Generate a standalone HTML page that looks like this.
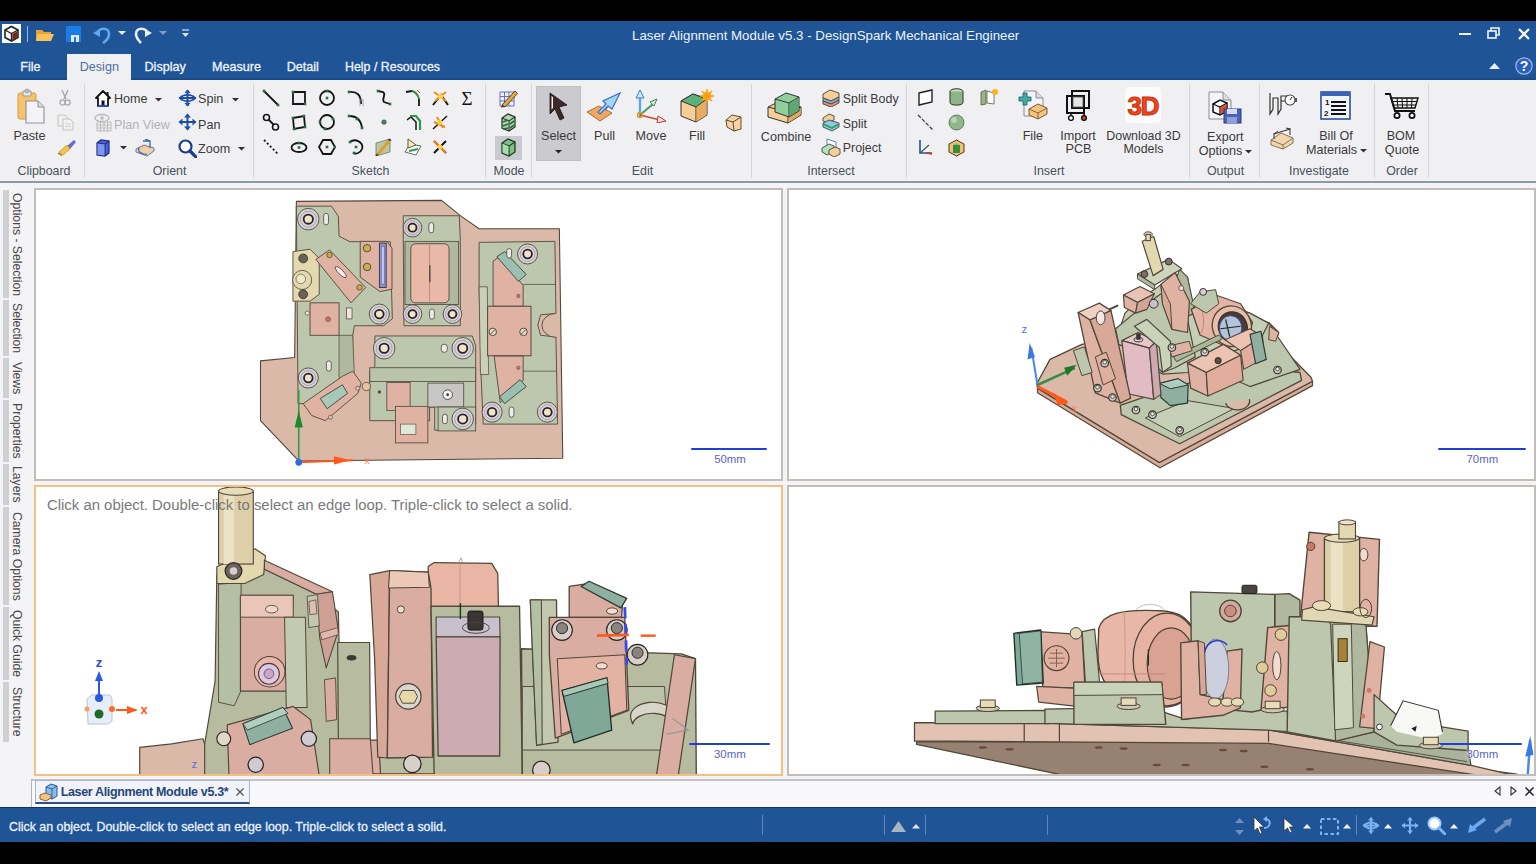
<!DOCTYPE html>
<html><head><meta charset="utf-8"><style>
html,body{margin:0;padding:0;width:1536px;height:864px;overflow:hidden;background:#f1f1f3;}
body{position:relative;font-family:"Liberation Sans",sans-serif;}
.t{position:absolute;line-height:1;white-space:pre;}
.r{position:absolute;display:block;}
#wrap{position:absolute;left:0;top:0;width:1536px;height:864px;}
</style></head><body><div id="wrap">
<div class="r" style="left:0px;top:0px;width:1536px;height:21px;background:#000;"></div>
<div class="r" style="left:0px;top:21px;width:1536px;height:59px;background:#1f5497;"></div>
<div class="r" style="left:0px;top:842px;width:1536px;height:22px;background:#000;"></div>
<div class="r" style="left:0px;top:80px;width:1536px;height:101px;background:#f0f0f3;"></div>
<div class="r" style="left:0px;top:181px;width:1536px;height:2px;background:#8b9bab;"></div>
<div class="r" style="left:0px;top:183px;width:1536px;height:625px;background:#f4f4f7;"></div>
<div class="r" style="left:0px;top:807px;width:1536px;height:35px;background:#1f5497;"></div>
<div class="r" style="left:0px;top:807px;width:1536px;height:1px;background:#13335e;"></div>
<div class="t" style="left:632.0px;top:28.7px;font-size:13.3px;color:#eef3fa;">Laser Alignment Module v5.3 - DesignSpark Mechanical Engineer</div>
<svg class="r" style="left:2px;top:24px;" width="19" height="19" viewBox="0 0 19 19"><rect x="0" y="0" width="19" height="19" fill="#fff"/><path d="M9.5 2.5 L16 6 L16 13.5 L9.5 17 L3 13.5 L3 6 Z" fill="#fff" stroke="#222" stroke-width="1.6"/><path d="M3 6 L9.5 9.5 L16 6 M9.5 9.5 L9.5 17" fill="none" stroke="#222" stroke-width="1.4"/><path d="M10.3 10 L15.3 7.3 L15.3 13 L10.3 15.8 Z" fill="#7a2414"/></svg>
<div class="r" style="left:27px;top:26px;width:1px;height:16px;background:#9fb6d8;"></div>
<svg class="r" style="left:36px;top:28px;" width="18" height="14" viewBox="0 0 18 14"><path d="M0 2 L6 2 L8 4 L15 4 L15 13 L0 13 Z" fill="#e9a33a"/><path d="M2 6 L18 6 L15 13 L0 13 Z" fill="#fbc15b"/></svg>
<svg class="r" style="left:66px;top:26px;" width="15" height="16" viewBox="0 0 15 16"><rect x="0" y="0" width="15" height="16" fill="#1c7ce6"/><rect x="5" y="9" width="8" height="7" fill="#dfe9f7"/><rect x="8" y="11" width="2" height="5" fill="#1c7ce6"/></svg>
<svg class="r" style="left:93px;top:25px;transform:scaleX(1)" width="19" height="20" viewBox="0 0 19 20"><path d="M4 9 C6 2, 16 2, 16 9 C16 13, 13 16, 10 18" fill="none" stroke="#5fa8f4" stroke-width="2.6"/><path d="M0 8 L7 4 L7 12 Z" fill="#5fa8f4"/></svg>
<svg class="r" style="left:118px;top:31px;" width="8" height="5" viewBox="0 0 8 5"><path d="M0 0 L8 0 L4 4 Z" fill="#e8eef8"/></svg>
<svg class="r" style="left:134px;top:25px;" width="18" height="20" viewBox="0 0 18 20"><path d="M14 9 C12 2, 2 2, 2 9 C2 13, 5 16, 7 18" fill="none" stroke="#e8eef8" stroke-width="2.6"/><path d="M18 8 L11 4 L11 12 Z" fill="#e8eef8"/></svg>
<svg class="r" style="left:159px;top:31px;" width="8" height="5" viewBox="0 0 8 5"><path d="M0 0 L8 0 L4 4 Z" fill="#7f9cc4"/></svg>
<svg class="r" style="left:181px;top:29px;" width="9" height="9" viewBox="0 0 9 9"><path d="M1 1 L8 1" stroke="#dbe6f3" stroke-width="1.2"/><path d="M1 4 L8 4 L4.5 8 Z" fill="#dbe6f3"/></svg>
<div class="r" style="left:1459px;top:32.5px;width:12px;height:2.4px;background:#f0f4fa;"></div>
<svg class="r" style="left:1487px;top:27px;" width="14" height="13" viewBox="0 0 14 13"><rect x="1" y="4" width="8" height="7" fill="none" stroke="#f0f4fa" stroke-width="1.6"/><path d="M4 4 L4 1 L12 1 L12 8 L9 8" fill="none" stroke="#f0f4fa" stroke-width="1.6"/></svg>
<svg class="r" style="left:1518px;top:28px;" width="12" height="12" viewBox="0 0 12 12"><path d="M1 1 L11 11 M11 1 L1 11" stroke="#f0f4fa" stroke-width="2.4"/></svg>
<div class="r" style="left:67px;top:54px;width:64px;height:26px;background:#f0f0f3;"></div>
<div class="t" style="left:20.3px;top:60.7px;font-size:12.6px;color:#eef3fa;-webkit-text-stroke:0.3px #eef3fa;">File</div>
<div class="t" style="left:79.7px;top:60.7px;font-size:12.6px;color:#4d6fa0;">Design</div>
<div class="t" style="left:144.5px;top:60.7px;font-size:12.6px;color:#eef3fa;-webkit-text-stroke:0.3px #eef3fa;">Display</div>
<div class="t" style="left:212.0px;top:60.7px;font-size:12.6px;color:#eef3fa;-webkit-text-stroke:0.3px #eef3fa;">Measure</div>
<div class="t" style="left:286.7px;top:60.7px;font-size:12.6px;color:#eef3fa;-webkit-text-stroke:0.3px #eef3fa;">Detail</div>
<div class="t" style="left:345.0px;top:60.9px;font-size:12.4px;color:#eef3fa;-webkit-text-stroke:0.3px #eef3fa;">Help / Resources</div>
<div class="r" style="left:0px;top:78px;width:67px;height:2px;background:#1a4a8a;"></div>
<div class="r" style="left:131px;top:78px;width:1405px;height:2px;background:#1a4a8a;"></div>
<svg class="r" style="left:1489px;top:63px;" width="11" height="6" viewBox="0 0 11 6"><path d="M0 6 L5.5 0 L11 6 Z" fill="#e9eef6"/></svg>
<svg class="r" style="left:1515px;top:57px;" width="18" height="18" viewBox="0 0 18 18"><circle cx="9" cy="9" r="8.2" fill="#2a5fc2" stroke="#9fb7e0" stroke-width="1.2"/><text x="9" y="14.2" font-size="14" font-weight="bold" text-anchor="middle" fill="#fff" font-family="Liberation Sans">?</text></svg>
<div class="r" style="left:84px;top:84px;width:1px;height:94px;background:#d3d5da;"></div>
<div class="r" style="left:253px;top:84px;width:1px;height:94px;background:#d3d5da;"></div>
<div class="r" style="left:485px;top:84px;width:1px;height:94px;background:#d3d5da;"></div>
<div class="r" style="left:531px;top:84px;width:1px;height:94px;background:#d3d5da;"></div>
<div class="r" style="left:751px;top:84px;width:1px;height:94px;background:#d3d5da;"></div>
<div class="r" style="left:906px;top:84px;width:1px;height:94px;background:#d3d5da;"></div>
<div class="r" style="left:1189px;top:84px;width:1px;height:94px;background:#d3d5da;"></div>
<div class="r" style="left:1259px;top:84px;width:1px;height:94px;background:#d3d5da;"></div>
<div class="r" style="left:1374px;top:84px;width:1px;height:94px;background:#d3d5da;"></div>
<div class="r" style="left:1428px;top:84px;width:1px;height:94px;background:#d3d5da;"></div>
<div class="t" style="left:-106.0px;width:300px;text-align:center;top:164.5px;font-size:12.4px;color:#48505a;">Clipboard</div>
<div class="t" style="left:19.5px;width:300px;text-align:center;top:164.5px;font-size:12.4px;color:#48505a;">Orient</div>
<div class="t" style="left:220.5px;width:300px;text-align:center;top:164.5px;font-size:12.4px;color:#48505a;">Sketch</div>
<div class="t" style="left:359.0px;width:300px;text-align:center;top:164.5px;font-size:12.4px;color:#48505a;">Mode</div>
<div class="t" style="left:492.5px;width:300px;text-align:center;top:164.5px;font-size:12.4px;color:#48505a;">Edit</div>
<div class="t" style="left:681.0px;width:300px;text-align:center;top:164.5px;font-size:12.4px;color:#48505a;">Intersect</div>
<div class="t" style="left:899.0px;width:300px;text-align:center;top:164.5px;font-size:12.4px;color:#48505a;">Insert</div>
<div class="t" style="left:1075.5px;width:300px;text-align:center;top:164.5px;font-size:12.4px;color:#48505a;">Output</div>
<div class="t" style="left:1169.0px;width:300px;text-align:center;top:164.5px;font-size:12.4px;color:#48505a;">Investigate</div>
<div class="t" style="left:1252.0px;width:300px;text-align:center;top:164.5px;font-size:12.4px;color:#48505a;">Order</div>
<svg class="r" style="left:17px;top:88px;" width="28" height="36" viewBox="0 0 28 36"><rect x="1" y="5" width="18" height="26" rx="2" fill="#f6c26b" stroke="#d99a3a" stroke-width="1"/><path d="M6 3 L14 3 L14 8 L6 8 Z" fill="#e8e8e8" stroke="#9a9a9a" stroke-width="1"/><circle cx="10" cy="3" r="2" fill="none" stroke="#9a9a9a" stroke-width="1"/><path d="M9 13 L21 13 L27 19 L27 35 L9 35 Z" fill="#f4f4f8" stroke="#8f8f9a" stroke-width="1.1"/><path d="M21 13 L21 19 L27 19" fill="#dadae2" stroke="#8f8f9a" stroke-width="1"/></svg>
<div class="t" style="left:-120.5px;width:300px;text-align:center;top:130.1px;font-size:12.6px;color:#3a3a3a;">Paste</div>
<svg class="r" style="left:59px;top:89px;" width="12" height="18" viewBox="0 0 12 18"><path d="M3 1 L7 10 M9 1 L5 10" stroke="#a8a8a8" stroke-width="1.4"/><circle cx="3.5" cy="13.5" r="2.6" fill="none" stroke="#a8a8a8" stroke-width="1.3"/><circle cx="8.5" cy="13.5" r="2.6" fill="none" stroke="#a8a8a8" stroke-width="1.3"/></svg>
<svg class="r" style="left:57px;top:114px;" width="18" height="17" viewBox="0 0 18 17"><path d="M1 1 L8 1 L11 4 L11 12 L1 12 Z" fill="#efefef" stroke="#c4c4c4"/><path d="M6 5 L13 5 L16 8 L16 16 L6 16 Z" fill="#f2f2f2" stroke="#c4c4c4"/><path d="M8 10 L14 10 M8 12.5 L14 12.5" stroke="#cfcfcf"/></svg>
<svg class="r" style="left:57px;top:139px;" width="19" height="17" viewBox="0 0 19 17"><path d="M10 7 L17 1 L19 3 L13 10 Z" fill="#6a6bd0"/><path d="M2 13 L10 6 L13 10 L6 16 Z" fill="#f1c44a" stroke="#c79a2a" stroke-width="0.8"/><path d="M1 14 L5 16.5" stroke="#8a6a22" stroke-width="1.2"/></svg>
<svg class="r" style="left:95px;top:90px;" width="16" height="17" viewBox="0 0 16 17"><path d="M8 1 L15 8 L13 8 L13 16 L3 16 L3 8 L1 8 Z" fill="#fff" stroke="#111" stroke-width="1.8" stroke-linejoin="round"/><rect x="6.5" y="10.5" width="3" height="5" fill="#111"/><path d="M3 16 L13 16" stroke="#2c49c8" stroke-width="2.2"/><rect x="11.5" y="2" width="2" height="4" fill="#111"/></svg>
<div class="t" style="left:114.0px;top:93.3px;font-size:12.6px;color:#3a3a3a;">Home</div>
<svg class="r" style="left:155px;top:98px;" width="7" height="4" viewBox="0 0 7 4"><path d="M0 0 L7 0 L3.5 3.5 Z" fill="#333"/></svg>
<svg class="r" style="left:178px;top:89px;" width="19" height="18" viewBox="0 0 19 18"><path d="M9.5 1 L9.5 17 M1 9 L18 9" stroke="#1d4fa8" stroke-width="2"/><path d="M6.5 4 L9.5 0.5 L12.5 4 Z M6.5 14 L9.5 17.5 L12.5 14 Z M4 6 L0.5 9 L4 12 Z M15 6 L18.5 9 L15 12 Z" fill="#1d4fa8"/><ellipse cx="9.5" cy="9" rx="6" ry="3.2" fill="none" stroke="#1d4fa8" stroke-width="1.8"/></svg>
<div class="t" style="left:198.0px;top:93.3px;font-size:12.6px;color:#3a3a3a;">Spin</div>
<svg class="r" style="left:232px;top:98px;" width="7" height="4" viewBox="0 0 7 4"><path d="M0 0 L7 0 L3.5 3.5 Z" fill="#333"/></svg>
<svg class="r" style="left:94px;top:113px;" width="18" height="19" viewBox="0 0 18 19"><ellipse cx="8" cy="5" rx="7" ry="3.5" fill="none" stroke="#b9b9b9" stroke-width="1.3"/><circle cx="8" cy="5" r="1.8" fill="#b9b9b9"/><path d="M3 9 L17 9 L17 18 L3 18 Z M3 12 L17 12 M3 15 L17 15 M6.5 9 L6.5 18 M10 9 L10 18 M13.5 9 L13.5 18" fill="none" stroke="#bcbcbc" stroke-width="1"/></svg>
<div class="t" style="left:114.0px;top:118.5px;font-size:12.6px;color:#b3b3b3;">Plan View</div>
<svg class="r" style="left:178px;top:113px;" width="19" height="18" viewBox="0 0 19 18"><path d="M9.5 1.5 L9.5 16.5 M1.5 9 L17.5 9" stroke="#1d4fa8" stroke-width="2"/><path d="M6 4.5 L9.5 0.5 L13 4.5 Z M6 13.5 L9.5 17.5 L13 13.5 Z M4.5 5.5 L0.5 9 L4.5 12.5 Z M14.5 5.5 L18.5 9 L14.5 12.5 Z" fill="#1d4fa8"/></svg>
<div class="t" style="left:198.0px;top:118.5px;font-size:12.6px;color:#3a3a3a;">Pan</div>
<svg class="r" style="left:95px;top:139px;" width="15" height="18" viewBox="0 0 15 18"><path d="M2 4 L6 1 L14 2 L14 14 L10 17 L2 16 Z" fill="#4b63d8" stroke="#1a2a80" stroke-width="1.2"/><path d="M2 4 L10 5 L14 2 M10 5 L10 17" fill="none" stroke="#1a2a80" stroke-width="1.1"/><path d="M2.5 4.5 L9.5 5.5 L9.5 16.5 L2.5 15.5 Z" fill="#7f95ef"/></svg>
<svg class="r" style="left:120px;top:146px;" width="7" height="4" viewBox="0 0 7 4"><path d="M0 0 L7 0 L3.5 3.5 Z" fill="#333"/></svg>
<svg class="r" style="left:135px;top:139px;" width="20" height="18" viewBox="0 0 20 18"><path d="M1 10 L9 6 L19 9 L12 14 Z" fill="#f3c88d" stroke="#6a7a9a" stroke-width="1"/><path d="M1 10 L1 13 L12 17 L19 12 L19 9" fill="#e8d0b0" stroke="#6a7a9a" stroke-width="1"/><path d="M8 2 L15 2 L15 9 M10 0 L15 2" fill="none" stroke="#3f63b0" stroke-width="1.3"/><path d="M4 9 C2 13, 8 16, 12 15" fill="none" stroke="#3f63b0" stroke-width="1.2"/></svg>
<svg class="r" style="left:178px;top:139px;" width="19" height="19" viewBox="0 0 19 19"><circle cx="7.5" cy="7.5" r="6" fill="#fff" stroke="#1b3b8c" stroke-width="2.2"/><path d="M12 12 L18 18" stroke="#1b3b8c" stroke-width="3.2" stroke-linecap="round"/></svg>
<div class="t" style="left:198.0px;top:143.3px;font-size:12.6px;color:#3a3a3a;">Zoom</div>
<svg class="r" style="left:238px;top:147px;" width="7" height="4" viewBox="0 0 7 4"><path d="M0 0 L7 0 L3.5 3.5 Z" fill="#333"/></svg>
<svg class="r" style="left:262px;top:89px;" width="18" height="18" viewBox="0 0 18 18"><path d="M2 2 L16 16" stroke="#151515" stroke-width="1.8"/><rect x="0.7" y="0.7" width="2.6" height="2.6" fill="#2b6b4a"/><rect x="14.7" y="14.7" width="2.6" height="2.6" fill="#2b6b4a"/></svg>
<svg class="r" style="left:290px;top:89px;" width="18" height="18" viewBox="0 0 18 18"><path d="M3 3 L15 3 L15 15 L3 15 Z" fill="none" stroke="#151515" stroke-width="1.8"/><rect x="1.7" y="1.7" width="2.6" height="2.6" fill="#2b6b4a"/><rect x="13.7" y="13.7" width="2.6" height="2.6" fill="#2b6b4a"/></svg>
<svg class="r" style="left:318px;top:89px;" width="18" height="18" viewBox="0 0 18 18"><circle cx="9" cy="9" r="7" fill="none" stroke="#151515" stroke-width="1.8"/><rect x="7.7" y="7.7" width="2.6" height="2.6" fill="#2b6b4a"/><rect x="7.7" y="0.7" width="2.6" height="2.6" fill="#2b6b4a"/></svg>
<svg class="r" style="left:347px;top:89px;" width="18" height="18" viewBox="0 0 18 18"><path d="M2 3 C10 2, 14 6, 14 15" fill="none" stroke="#151515" stroke-width="1.8"/><path d="M13 10 L13 17 M16 10 L16 17" stroke="#9a9a9a" stroke-width="0.9"/><rect x="0.7" y="1.7" width="2.6" height="2.6" fill="#2b6b4a"/></svg>
<svg class="r" style="left:375px;top:89px;" width="18" height="18" viewBox="0 0 18 18"><path d="M3 2 L8 3 C12 5, 6 10, 9 13 L15 15" fill="none" stroke="#151515" stroke-width="1.8"/><rect x="1.7" y="0.7" width="2.6" height="2.6" fill="#2b6b4a"/><rect x="13.7" y="13.7" width="2.6" height="2.6" fill="#2b6b4a"/></svg>
<svg class="r" style="left:404px;top:89px;" width="18" height="18" viewBox="0 0 18 18"><path d="M2 3 L8 2" stroke="#151515" stroke-width="1.8"/><path d="M8 2 C12 3, 14 6, 15 10" fill="none" stroke="#2f8a4a" stroke-width="2"/><path d="M15 10 L15 17" stroke="#151515" stroke-width="1.8"/><path d="M13 1 L16 4" stroke="#d03020" stroke-width="1"/></svg>
<svg class="r" style="left:431px;top:89px;" width="18" height="18" viewBox="0 0 18 18"><path d="M2 16 L10 6 L17 16" fill="none" stroke="#151515" stroke-width="2"/><path d="M3 3 L15 12 M15 3 L4 12" stroke="#f08a20" stroke-width="2"/><circle cx="9.5" cy="7.5" r="2.6" fill="#ffd23a"/></svg>
<svg class="r" style="left:458px;top:89px;" width="18" height="18" viewBox="0 0 18 18"><text x="9" y="16" font-size="19" text-anchor="middle" fill="#151515" font-family="Liberation Serif">&#931;</text></svg>
<svg class="r" style="left:262px;top:113px;" width="18" height="18" viewBox="0 0 18 18"><circle cx="4.5" cy="4.5" r="3" fill="none" stroke="#151515" stroke-width="1.6"/><path d="M6.5 6.5 L12 12" stroke="#151515" stroke-width="1.8"/><circle cx="13.5" cy="14" r="3" fill="none" stroke="#151515" stroke-width="1.6"/></svg>
<svg class="r" style="left:290px;top:113px;" width="18" height="18" viewBox="0 0 18 18"><path d="M3 5 L14 3 L15 14 L4 16 Z" fill="none" stroke="#151515" stroke-width="1.8"/><rect x="1.7" y="3.7" width="2.6" height="2.6" fill="#2b6b4a"/><rect x="12.7" y="1.7" width="2.6" height="2.6" fill="#2b6b4a"/><rect x="13.7" y="12.7" width="2.6" height="2.6" fill="#2b6b4a"/><rect x="2.7" y="14.7" width="2.6" height="2.6" fill="#2b6b4a"/></svg>
<svg class="r" style="left:318px;top:113px;" width="18" height="18" viewBox="0 0 18 18"><circle cx="9" cy="9" r="7" fill="none" stroke="#151515" stroke-width="1.8"/><rect x="0.7" y="7.7" width="2.6" height="2.6" fill="#2b6b4a"/><rect x="13.7" y="4.7" width="2.6" height="2.6" fill="#2b6b4a"/><rect x="5.7" y="14.7" width="2.6" height="2.6" fill="#2b6b4a"/></svg>
<svg class="r" style="left:347px;top:113px;" width="18" height="18" viewBox="0 0 18 18"><path d="M2 3 C9 3, 14 7, 15 15" fill="none" stroke="#151515" stroke-width="1.8"/><rect x="0.7" y="1.7" width="2.6" height="2.6" fill="#2b6b4a"/><rect x="8.7" y="4.7" width="2.6" height="2.6" fill="#2b6b4a"/><rect x="13.7" y="13.7" width="2.6" height="2.6" fill="#2b6b4a"/></svg>
<svg class="r" style="left:375px;top:113px;" width="18" height="18" viewBox="0 0 18 18"><circle cx="9" cy="9" r="2.6" fill="#3d7a56"/></svg>
<svg class="r" style="left:404px;top:113px;" width="18" height="18" viewBox="0 0 18 18"><path d="M3 7 L7 4 L12 9 L12 17" fill="none" stroke="#151515" stroke-width="1.5"/><path d="M6 3 L12 3 L16 8 L16 17" fill="none" stroke="#2a9a4a" stroke-width="2.2"/></svg>
<svg class="r" style="left:431px;top:113px;" width="18" height="18" viewBox="0 0 18 18"><path d="M2 16 L16 3" stroke="#151515" stroke-width="1.4"/><path d="M3 9 L14 14 M6 4 L12 15" stroke="#f08a20" stroke-width="2"/><circle cx="9" cy="9.5" r="2.4" fill="#ffd23a"/></svg>
<svg class="r" style="left:262px;top:138px;" width="18" height="18" viewBox="0 0 18 18"><path d="M2 2 L16 16" stroke="#151515" stroke-width="1.8" stroke-dasharray="2 2.2"/></svg>
<svg class="r" style="left:290px;top:138px;" width="18" height="18" viewBox="0 0 18 18"><ellipse cx="9" cy="9.5" rx="7.5" ry="4.5" fill="none" stroke="#151515" stroke-width="1.8"/><rect x="7.7" y="8.2" width="2.6" height="2.6" fill="#2b6b4a"/><rect x="7.7" y="3.7" width="2.6" height="2.6" fill="#2b6b4a"/></svg>
<svg class="r" style="left:318px;top:138px;" width="18" height="18" viewBox="0 0 18 18"><path d="M5 2 L13 2 L17 9 L13 16 L5 16 L1 9 Z" fill="none" stroke="#151515" stroke-width="1.8"/><rect x="7.7" y="7.7" width="2.6" height="2.6" fill="#2b6b4a"/><rect x="15.7" y="7.7" width="2.6" height="2.6" fill="#2b6b4a"/></svg>
<svg class="r" style="left:347px;top:138px;" width="18" height="18" viewBox="0 0 18 18"><path d="M3 4 C8 0, 17 4, 15 11 C13 16, 8 16, 7 15" fill="none" stroke="#151515" stroke-width="1.8"/><rect x="7.7" y="7.7" width="2.6" height="2.6" fill="#2b6b4a"/><rect x="1.7" y="2.7" width="2.6" height="2.6" fill="#2b6b4a"/><rect x="5.7" y="13.7" width="2.6" height="2.6" fill="#2b6b4a"/></svg>
<svg class="r" style="left:375px;top:138px;" width="18" height="18" viewBox="0 0 18 18"><path d="M1 5 L15 1 L15 14 L1 18 Z" fill="#b6c8a8" stroke="#6a7a60" stroke-width="0.8"/><path d="M3 16 L14 3" stroke="#e39b2a" stroke-width="3"/><path d="M3 16 L1 18" stroke="#333" stroke-width="1.5"/><path d="M13 2 L15 1 L16 3" stroke="#444" stroke-width="1"/></svg>
<svg class="r" style="left:404px;top:138px;" width="18" height="18" viewBox="0 0 18 18"><path d="M1 14 L6 6 L17 8 L12 17 Z" fill="#fff" stroke="#6a6a6a" stroke-width="1"/><path d="M4 1 L4 10 L12 7 Z" fill="#fff3a8" stroke="#555" stroke-width="1"/><path d="M5 13 L14 11" stroke="#2a9a4a" stroke-width="2"/></svg>
<svg class="r" style="left:431px;top:138px;" width="18" height="18" viewBox="0 0 18 18"><path d="M3 15 L15 3 M3 3 L15 15" stroke="#151515" stroke-width="2"/><path d="M3 3 L15 15" stroke="#f08a20" stroke-width="2"/><circle cx="9" cy="9" r="2.4" fill="#ffd23a"/></svg>
<div class="r" style="left:495px;top:136px;width:27px;height:24px;background:#c9cacf;"></div>
<svg class="r" style="left:499px;top:89px;" width="19" height="19" viewBox="0 0 19 19"><path d="M1 3 L15 3 L15 17 L1 17 Z M1 7.5 L15 7.5 M1 12 L15 12 M5.5 3 L5.5 17 M10 3 L10 17" fill="none" stroke="#5a63b8" stroke-width="0.9"/><path d="M3 16 L16 2 L18.5 4.5 L6 18 Z" fill="#f0a830" stroke="#333" stroke-width="0.9"/><path d="M3 16 L2 18.5 L6 18" fill="#333"/></svg>
<svg class="r" style="left:500px;top:113px;" width="17" height="19" viewBox="0 0 17 19"><path d="M2 5 L8 1 L15 4 L15 14 L9 18 L2 15 Z" fill="#b6d8b4" stroke="#2a3a2a" stroke-width="1.3"/><path d="M2 5 L9 8 L15 4 M9 8 L9 18" fill="none" stroke="#2a3a2a" stroke-width="1.1"/><path d="M3 9 L8 7 M3 13 L8 11 M3 16 L8 15 M10 11 L14 8 M10 15 L14 12" stroke="#2a6a3a" stroke-width="1.6"/></svg>
<svg class="r" style="left:500px;top:138px;" width="17" height="19" viewBox="0 0 17 19"><path d="M2 5 L8 1 L15 4 L15 14 L9 18 L2 15 Z" fill="#7fc08a" stroke="#1e3a22" stroke-width="1.3"/><path d="M2 5 L9 8 L15 4 M9 8 L9 18" fill="none" stroke="#1e3a22" stroke-width="1.1"/><path d="M2.6 5.6 L8.4 8.3 L8.4 17 L2.6 14.6 Z" fill="#a8dca8"/></svg>
<div class="r" style="left:536px;top:86px;width:45px;height:75px;background:#cbcbcf;border:1px solid #bdbdc2;box-sizing:border-box;"></div>
<svg class="r" style="left:548px;top:92px;" width="21" height="30" viewBox="0 0 21 30"><path d="M2 1 L19 13 L11 15 L16 26 L12 28 L7 17 L2 22 Z" fill="#3b2a26" stroke="#1a1210" stroke-width="0.8"/><path d="M3.5 4 L5 5 L5 16 L3.5 17.5 Z" fill="#f4eeee"/></svg>
<div class="t" style="left:408.5px;width:300px;text-align:center;top:130.1px;font-size:12.6px;color:#3a3a3a;">Select</div>
<svg class="r" style="left:554.5px;top:150px;" width="7" height="4" viewBox="0 0 7 4"><path d="M0 0 L7 0 L3.5 3.5 Z" fill="#222"/></svg>
<svg class="r" style="left:586px;top:92px;" width="36" height="32" viewBox="0 0 36 32"><path d="M1 20 L13 14 L26 21 L14 29 Z" fill="#f0a860" stroke="#b36a30" stroke-width="1"/><path d="M14 21 L23 12 M19 18 L22 14" stroke="#3a70c0" stroke-width="1.4"/><path d="M34 1 L26 17 L22 14 L14 22 L12 20 L20 12 L17 9 Z" fill="#a8d4f6" stroke="#3a70c0" stroke-width="1.2"/></svg>
<div class="t" style="left:454.5px;width:300px;text-align:center;top:130.1px;font-size:12.6px;color:#3a3a3a;">Pull</div>
<svg class="r" style="left:634px;top:89px;" width="33" height="34" viewBox="0 0 33 34"><path d="M6 28 L6 5" stroke="#5aa8e8" stroke-width="2.4"/><path d="M2 9 L6 1 L10 9 Z" fill="#cfe6f8" stroke="#3a80c0" stroke-width="1"/><path d="M6 26 L19 15" stroke="#4e9a72" stroke-width="2.2"/><path d="M16 13 L23 10 L20 17 Z" fill="#d0ecd8" stroke="#3a8a5a" stroke-width="1"/><path d="M6 26 L26 31" stroke="#d04a3a" stroke-width="1.8"/><path d="M24 27 L32 32 L23 34 Z" fill="#fbe0dc" stroke="#c03a2a" stroke-width="1"/><circle cx="6" cy="26" r="2.5" fill="none" stroke="#d8a020" stroke-width="1.4"/></svg>
<div class="t" style="left:501.0px;width:300px;text-align:center;top:130.1px;font-size:12.6px;color:#3a3a3a;">Move</div>
<svg class="r" style="left:680px;top:89px;" width="34" height="34" viewBox="0 0 34 34"><path d="M1 12 L13 5 L27 10 L27 26 L16 33 L1 27 Z" fill="#f6cf96" stroke="#333" stroke-width="1"/><path d="M1 12 L16 18 L27 10 L13 5 Z" fill="#5cb07a" stroke="#333" stroke-width="1"/><path d="M16 18 L16 33" stroke="#333" stroke-width="1"/><path d="M16.5 18.5 L26.5 11 L26.5 26 L16.5 32.5 Z" fill="#eaaa62"/><circle cx="27" cy="7" r="4.5" fill="#ffb21e"/><path d="M27 0 L27 14 M20 7 L34 7 M22 2 L32 12 M32 2 L22 12" stroke="#ff9a10" stroke-width="1.4"/></svg>
<div class="t" style="left:547.0px;width:300px;text-align:center;top:130.1px;font-size:12.6px;color:#3a3a3a;">Fill</div>
<svg class="r" style="left:725px;top:114px;" width="18" height="18" viewBox="0 0 18 18"><path d="M7 1 L16 3 L16 15 L9 17 L2 13 L1 6 Z" fill="#f6d3a0" stroke="#5a4a3a" stroke-width="1"/><path d="M1 6 L8 8 L16 3 M8 8 L9 17" fill="none" stroke="#5a4a3a" stroke-width="1"/></svg>
<svg class="r" style="left:767px;top:91px;" width="35" height="33" viewBox="0 0 35 33"><path d="M1 16 L9 12 L34 16 L34 24 L21 32 L1 26 Z" fill="#f6cf96" stroke="#333" stroke-width="1"/><path d="M1 16 L21 21 L34 16" fill="none" stroke="#333" stroke-width="1"/><path d="M21 21 L21 32" stroke="#333"/><path d="M21.5 21.5 L33.5 16.5 L33.5 23.5 L21.5 31.5 Z" fill="#e7a860"/><path d="M8 8 L19 2 L32 6 L32 20 L22 26 L8 21 Z" fill="#8fcf9c" stroke="#333" stroke-width="1"/><path d="M8 8 L22 12 L32 6 M22 12 L22 26" fill="none" stroke="#333" stroke-width="1"/><path d="M22.5 12.5 L31.5 6.8 L31.5 19.5 L22.5 25.3 Z" fill="#5da872"/></svg>
<div class="t" style="left:636.0px;width:300px;text-align:center;top:130.5px;font-size:12.6px;color:#3a3a3a;">Combine</div>
<svg class="r" style="left:822px;top:89px;" width="18" height="18" viewBox="0 0 18 18"><path d="M1 5 L8 1 L17 4 L17 8 L9 12 L1 9 Z" fill="#f6cf96" stroke="#444" stroke-width="0.9"/><path d="M1 9 L9 12 L17 8 L17 11 L9 15 L1 12 Z" fill="#7ab8e8" stroke="#444" stroke-width="0.9"/><path d="M1 12 L9 15 L17 11 L17 14 L9 18 L1 15 Z" fill="#f08a70" stroke="#444" stroke-width="0.9"/></svg>
<div class="t" style="left:842.8px;top:93.1px;font-size:12.4px;color:#3a3a3a;">Split Body</div>
<svg class="r" style="left:822px;top:113px;" width="18" height="19" viewBox="0 0 18 19"><path d="M1 5 L7 1 L12 3 L12 7 L6 10 L1 8 Z" fill="#f6cf96" stroke="#444" stroke-width="0.9"/><path d="M1 10 L7 7 L17 10 L17 14 L10 18 L1 14 Z" fill="#8ac8ee" stroke="#444" stroke-width="0.9"/><path d="M1 11 L10 15 L17 11" fill="none" stroke="#2aa040" stroke-width="1.6"/></svg>
<div class="t" style="left:842.8px;top:117.5px;font-size:12.4px;color:#3a3a3a;">Split</div>
<svg class="r" style="left:821px;top:138px;" width="20" height="19" viewBox="0 0 20 19"><path d="M6 1 L15 4 L15 10 L6 7 Z" fill="#fff" stroke="#5a80c0" stroke-width="1"/><path d="M1 10 L8 6 L13 8 L13 13 L6 17 L1 14 Z" fill="#b4e0b8" stroke="#444" stroke-width="0.9"/><path d="M8 12 L14 9 L19 11 L19 16 L13 19 L8 16 Z" fill="#f6cf96" stroke="#444" stroke-width="0.9"/></svg>
<div class="t" style="left:842.8px;top:141.9px;font-size:12.4px;color:#3a3a3a;">Project</div>
<svg class="r" style="left:917px;top:89px;" width="17" height="17" viewBox="0 0 17 17"><path d="M2 4 L15 1 L15 13 L2 16 Z" fill="#fff" stroke="#222" stroke-width="1.4"/></svg>
<svg class="r" style="left:948px;top:88px;" width="17" height="18" viewBox="0 0 17 18"><ellipse cx="8.5" cy="3.5" rx="6.5" ry="2.8" fill="#c4dcc0" stroke="#333" stroke-width="1"/><path d="M2 3.5 L2 14.5 C2 18, 15 18, 15 14.5 L15 3.5" fill="#8eb488" stroke="#333" stroke-width="1"/></svg>
<svg class="r" style="left:980px;top:88px;" width="19" height="18" viewBox="0 0 19 18"><path d="M1 4 L6 2 L6 16 L1 17 Z" fill="#9ab878" stroke="#555" stroke-width="0.8"/><path d="M7 3 L14 5 L14 16 L7 15 Z" fill="#fff" stroke="#555" stroke-width="0.8"/><circle cx="15" cy="4" r="3" fill="#ffb21e"/></svg>
<svg class="r" style="left:917px;top:114px;" width="17" height="17" viewBox="0 0 17 17"><path d="M1 1 L16 16" stroke="#444" stroke-width="1.3" stroke-dasharray="4 1.5"/></svg>
<svg class="r" style="left:948px;top:114px;" width="17" height="17" viewBox="0 0 17 17"><circle cx="8.5" cy="8.5" r="7.5" fill="#8fb88a" stroke="#4a6a48" stroke-width="0.8"/><circle cx="6" cy="6" r="3" fill="#c8e0c4" opacity="0.7"/></svg>
<svg class="r" style="left:917px;top:139px;" width="17" height="17" viewBox="0 0 17 17"><path d="M3 1 L3 14 L15 14" fill="none" stroke="#2a4aa8" stroke-width="1.6"/><path d="M3 14 L12 6" stroke="#2a6a40" stroke-width="1.3"/><path d="M9 14 L15 15" stroke="#d03a20" stroke-width="1.3"/></svg>
<svg class="r" style="left:948px;top:139px;" width="17" height="18" viewBox="0 0 17 18"><path d="M8.5 1 L16 5 L16 13 L8.5 17 L1 13 L1 5 Z" fill="#f2c070" stroke="#4a3a20" stroke-width="1"/><path d="M5 6 L12 6 L12 14 L5 14 Z" fill="#3a8a40"/><path d="M5 6 L8.5 4 L12 6" fill="#7ac070"/></svg>
<svg class="r" style="left:1018px;top:90px;" width="30" height="32" viewBox="0 0 30 32"><path d="M6 1 L18 1 L25 8 L25 26 L6 26 Z" fill="#f4f4f8" stroke="#8a8a9a" stroke-width="1"/><path d="M18 1 L18 8 L25 8" fill="#ddd" stroke="#8a8a9a"/><path d="M5 3 L9 3 L9 7 L13 7 L13 11 L9 11 L9 15 L5 15 L5 11 L1 11 L1 7 L5 7 Z" fill="#48a8a0" stroke="#206a70" stroke-width="0.9"/><path d="M11 19 L20 14 L29 18 L29 24 L20 29 L11 25 Z" fill="#f4c47c" stroke="#7a5a30" stroke-width="1"/><path d="M11 19 L20 23 L29 18 M20 23 L20 29" fill="none" stroke="#7a5a30" stroke-width="0.9"/></svg>
<div class="t" style="left:882.8px;width:300px;text-align:center;top:130.1px;font-size:12.6px;color:#3a3a3a;">File</div>
<svg class="r" style="left:1065px;top:90px;" width="26" height="31" viewBox="0 0 26 31"><rect x="7" y="1" width="17" height="17" fill="none" stroke="#111" stroke-width="2"/><rect x="2" y="6" width="17" height="17" fill="none" stroke="#111" stroke-width="2"/><rect x="8" y="7" width="10" height="10" fill="#e4e4e4" stroke="#555" stroke-width="0.8"/><path d="M6 23 L6 26 M19 23 L19 26" stroke="#111" stroke-width="1.6"/><circle cx="6" cy="28" r="2.4" fill="#fff" stroke="#111" stroke-width="1.4"/><circle cx="19" cy="28" r="2.4" fill="#e04020" stroke="#111" stroke-width="1.4"/></svg>
<div class="t" style="left:928.0px;width:300px;text-align:center;top:130.1px;font-size:12.6px;color:#3a3a3a;">Import</div>
<div class="t" style="left:928.5px;width:300px;text-align:center;top:143.1px;font-size:12.6px;color:#3a3a3a;">PCB</div>
<div class="r" style="left:1125px;top:87px;width:36px;height:36px;background:#fbfbfc;border-radius:5px;"></div>
<div class="t" style="left:993.0px;width:300px;text-align:center;top:92.5px;font-size:26px;color:#f0461c;font-weight:bold;letter-spacing:-1px;-webkit-text-stroke:1px #c83010;">3D</div>
<div class="t" style="left:993.5px;width:300px;text-align:center;top:130.3px;font-size:12.4px;color:#3a3a3a;">Download 3D</div>
<div class="t" style="left:993.5px;width:300px;text-align:center;top:143.3px;font-size:12.4px;color:#3a3a3a;">Models</div>
<svg class="r" style="left:1208px;top:91px;" width="34" height="33" viewBox="0 0 34 33"><path d="M1 1 L15 1 L23 9 L23 28 L1 28 Z" fill="#f6f6f8" stroke="#8a8a9a" stroke-width="1"/><path d="M15 1 L15 9 L23 9" fill="#ddd" stroke="#8a8a9a"/><path d="M5 13 L12 9 L19 12 L19 20 L12 24 L5 21 Z" fill="#fff" stroke="#111" stroke-width="1.5"/><path d="M5 13 L12 16 L19 12 M12 16 L12 24" fill="none" stroke="#111" stroke-width="1.3"/><path d="M12.6 16.5 L18.4 13 L18.4 19.6 L12.6 23 Z" fill="#e84a1c"/><rect x="16" y="18" width="17" height="14" fill="#4a62b8" stroke="#283c80"/><rect x="19" y="18" width="10" height="5" fill="#d8def0"/><rect x="19" y="26" width="10" height="6" fill="#8fa0d8"/></svg>
<div class="t" style="left:1075.2px;width:300px;text-align:center;top:131.1px;font-size:12.6px;color:#3a3a3a;">Export</div>
<div class="t" style="left:1070.5px;width:300px;text-align:center;top:145.3px;font-size:12.6px;color:#3a3a3a;">Options</div>
<svg class="r" style="left:1245px;top:150px;" width="7" height="4" viewBox="0 0 7 4"><path d="M0 0 L7 0 L3.5 3.5 Z" fill="#333"/></svg>
<svg class="r" style="left:1268px;top:92px;" width="29" height="24" viewBox="0 0 29 24"><path d="M2 1 L2 22 L5 17 L5 6 L10 6 L10 22 L13 17 L13 4 L22 4 L22 9 L13 9" fill="#f4f4f4" stroke="#333" stroke-width="1.2"/><circle cx="22" cy="8" r="5" fill="#fff" stroke="#444" stroke-width="1.1"/><path d="M22 8 L24 5" stroke="#333"/><rect x="27" y="6" width="2" height="4" fill="#555"/></svg>
<svg class="r" style="left:1269px;top:125px;" width="25" height="25" viewBox="0 0 25 25"><path d="M2 15 L12 8 L24 13 L24 18 L14 24 L2 20 Z" fill="#f2d6b0" stroke="#8a7050" stroke-width="1"/><path d="M2 15 L14 20 L24 13 M14 20 L14 24" fill="none" stroke="#8a7050" stroke-width="1"/><path d="M5 8 L5 14 M21 3 L21 10" stroke="#333" stroke-width="1"/><path d="M5 9 L21 4" stroke="#333" stroke-width="1.1"/><path d="M5 9 L9 6 M21 4 L17 3" stroke="#333" stroke-width="1"/></svg>
<svg class="r" style="left:1320px;top:91px;" width="31" height="29" viewBox="0 0 31 29"><rect x="1" y="1" width="29" height="27" fill="#f2f4fa" stroke="#2f4f9a" stroke-width="1.6"/><rect x="1" y="1" width="29" height="4" fill="#3a64b8"/><text x="5" y="14" font-size="8" font-weight="bold" fill="#111" font-family="Liberation Sans">1</text><text x="4" y="25" font-size="8" font-weight="bold" fill="#111" font-family="Liberation Sans">2</text><path d="M11 11 L26 11 M11 15 L26 15 M11 19 L26 19 M11 23 L26 23" stroke="#111" stroke-width="1.8"/></svg>
<div class="t" style="left:1186.0px;width:300px;text-align:center;top:130.1px;font-size:12.6px;color:#3a3a3a;">Bill Of</div>
<div class="t" style="left:1181.5px;width:300px;text-align:center;top:143.9px;font-size:12.6px;color:#3a3a3a;">Materials</div>
<svg class="r" style="left:1360px;top:149px;" width="7" height="4" viewBox="0 0 7 4"><path d="M0 0 L7 0 L3.5 3.5 Z" fill="#333"/></svg>
<svg class="r" style="left:1384px;top:92px;" width="36" height="28" viewBox="0 0 36 28"><path d="M1 2 L6 2 L11 19 L31 19" fill="none" stroke="#111" stroke-width="2"/><path d="M7 6 L34 6 L31 16 L10 16 Z" fill="none" stroke="#111" stroke-width="1.4"/><path d="M8 9.5 L33 9.5 M9 13 L32 13 M13 6 L14 16 M18 6 L18.5 16 M23 6 L23 16 M28 6 L27.5 16" stroke="#111" stroke-width="1"/><circle cx="13" cy="23.5" r="2.6" fill="#fff" stroke="#111" stroke-width="1.8"/><circle cx="28" cy="23.5" r="2.6" fill="#fff" stroke="#111" stroke-width="1.8"/></svg>
<div class="t" style="left:1251.0px;width:300px;text-align:center;top:130.1px;font-size:12.6px;color:#3a3a3a;">BOM</div>
<div class="t" style="left:1252.0px;width:300px;text-align:center;top:143.9px;font-size:12.6px;color:#3a3a3a;">Quote</div>
<div class="r" style="left:3px;top:190px;width:6px;height:108px;background:#cfd0d4;"></div>
<div class="r" style="left:9px;top:190px;width:21px;height:108px;background:#f4f4f6;"></div>
<div class="t" style="left:10px;top:190px;width:14px;height:108px;writing-mode:vertical-rl;font-size:12.2px;color:#484848;text-align:center;line-height:14px;">Options - Selection</div>
<div class="r" style="left:3px;top:300px;width:6px;height:56px;background:#cfd0d4;"></div>
<div class="r" style="left:9px;top:300px;width:21px;height:56px;background:#f4f4f6;"></div>
<div class="t" style="left:10px;top:300px;width:14px;height:56px;writing-mode:vertical-rl;font-size:12.2px;color:#484848;text-align:center;line-height:14px;">Selection</div>
<div class="r" style="left:3px;top:358px;width:6px;height:40px;background:#cfd0d4;"></div>
<div class="r" style="left:9px;top:358px;width:21px;height:40px;background:#f4f4f6;"></div>
<div class="t" style="left:10px;top:358px;width:14px;height:40px;writing-mode:vertical-rl;font-size:12.2px;color:#484848;text-align:center;line-height:14px;">Views</div>
<div class="r" style="left:3px;top:400px;width:6px;height:62px;background:#cfd0d4;"></div>
<div class="r" style="left:9px;top:400px;width:21px;height:62px;background:#f4f4f6;"></div>
<div class="t" style="left:10px;top:400px;width:14px;height:62px;writing-mode:vertical-rl;font-size:12.2px;color:#484848;text-align:center;line-height:14px;">Properties</div>
<div class="r" style="left:3px;top:464px;width:6px;height:41px;background:#cfd0d4;"></div>
<div class="r" style="left:9px;top:464px;width:21px;height:41px;background:#f4f4f6;"></div>
<div class="t" style="left:10px;top:464px;width:14px;height:41px;writing-mode:vertical-rl;font-size:12.2px;color:#484848;text-align:center;line-height:14px;">Layers</div>
<div class="r" style="left:3px;top:507px;width:6px;height:98px;background:#cfd0d4;"></div>
<div class="r" style="left:9px;top:507px;width:21px;height:98px;background:#f4f4f6;"></div>
<div class="t" style="left:10px;top:507px;width:14px;height:98px;writing-mode:vertical-rl;font-size:12.2px;color:#484848;text-align:center;line-height:14px;">Camera Options</div>
<div class="r" style="left:3px;top:607px;width:6px;height:73px;background:#cfd0d4;"></div>
<div class="r" style="left:9px;top:607px;width:21px;height:73px;background:#f4f4f6;"></div>
<div class="t" style="left:10px;top:607px;width:14px;height:73px;writing-mode:vertical-rl;font-size:12.2px;color:#484848;text-align:center;line-height:14px;">Quick Guide</div>
<div class="r" style="left:3px;top:682px;width:6px;height:60px;background:#cfd0d4;"></div>
<div class="r" style="left:9px;top:682px;width:21px;height:60px;background:#f4f4f6;"></div>
<div class="t" style="left:10px;top:682px;width:14px;height:60px;writing-mode:vertical-rl;font-size:12.2px;color:#484848;text-align:center;line-height:14px;">Structure</div>
<div class="r" style="left:34px;top:188px;width:749px;height:293px;background:#fff;border:2px solid #c4bcb7;box-sizing:border-box;"></div>
<div class="r" style="left:787px;top:188px;width:749px;height:293px;background:#fff;border:2px solid #c4bcb7;box-sizing:border-box;"></div>
<div class="r" style="left:787px;top:485px;width:749px;height:291px;background:#fff;border:2px solid #c4bcb7;box-sizing:border-box;"></div>
<div class="r" style="left:34px;top:485px;width:749px;height:291px;background:#fff;border:2px solid #f4bf82;box-sizing:border-box;"></div>
<div class="r" style="left:31px;top:779px;width:1505px;height:2px;background:#c4c4c8;"></div>
<div class="r" style="left:31px;top:781px;width:1505px;height:26px;background:#f8f8fa;"></div>
<div class="r" style="left:31px;top:779px;width:1px;height:28px;background:#b4b4b8;"></div>
<div class="r" style="left:35px;top:780px;width:215px;height:24px;background:#f1f3f8;border:1px solid #a9b4c6;border-bottom:2px solid #2c4f86;box-sizing:border-box;"></div>
<svg class="r" style="left:39px;top:783px;" width="19" height="19" viewBox="0 0 19 19"><path d="M7 4 L12 1 L18 3 L18 13 L13 16 L7 14 Z" fill="#86c0ee" stroke="#2a5a90" stroke-width="1"/><path d="M7 4 L13 6 L18 3 M13 6 L13 16" fill="none" stroke="#2a5a90" stroke-width="0.9"/><path d="M1 12 L6 10 L12 12 L12 15 L7 18 L1 16 Z" fill="#f4c47c" stroke="#7a5a30" stroke-width="0.9"/></svg>
<div class="t" style="left:60.7px;top:786.4px;font-size:12.5px;color:#25467a;font-weight:bold;letter-spacing:-0.35px;">Laser Alignment Module v5.3*</div>
<svg class="r" style="left:236px;top:788px;" width="8" height="8" viewBox="0 0 8 8"><path d="M0.5 0.5 L7.5 7.5 M7.5 0.5 L0.5 7.5" stroke="#555" stroke-width="1.3"/></svg>
<svg class="r" style="left:1494px;top:786px;" width="7" height="10" viewBox="0 0 7 10"><path d="M6 1 L1 5 L6 9 Z" fill="none" stroke="#333" stroke-width="1.1"/></svg>
<svg class="r" style="left:1510px;top:786px;" width="7" height="10" viewBox="0 0 7 10"><path d="M1 1 L6 5 L1 9 Z" fill="none" stroke="#333" stroke-width="1.1"/></svg>
<svg class="r" style="left:1525px;top:787px;" width="9" height="9" viewBox="0 0 9 9"><path d="M0.5 0.5 L8.5 8.5 M8.5 0.5 L0.5 8.5" stroke="#222" stroke-width="1.5"/></svg>
<div class="t" style="left:9.0px;top:820.8px;font-size:12.4px;color:#eaf0f8;-webkit-text-stroke:0.3px #eaf0f8;">Click an object. Double-click to select an edge loop. Triple-click to select a solid.</div>
<div class="r" style="left:762px;top:815px;width:1px;height:20px;background:#5f86bf;"></div>
<div class="r" style="left:884px;top:815px;width:1px;height:20px;background:#5f86bf;"></div>
<div class="r" style="left:925px;top:815px;width:1px;height:20px;background:#5f86bf;"></div>
<div class="r" style="left:1047px;top:815px;width:1px;height:20px;background:#5f86bf;"></div>
<div class="r" style="left:1356px;top:815px;width:1px;height:20px;background:#5f86bf;"></div>
<svg class="r" style="left:890px;top:820px;" width="17" height="13" viewBox="0 0 17 13"><path d="M1 12 L8.5 1 L16 12 Z" fill="#a8b4c4"/></svg>
<svg class="r" style="left:912px;top:824px;" width="8" height="5" viewBox="0 0 8 5"><path d="M0 4.5 L4 0 L8 4.5 Z" fill="#dfe8f4"/></svg>
<svg class="r" style="left:1234px;top:817px;" width="11" height="19" viewBox="0 0 11 19"><path d="M1 6 L5.5 1 L10 6 Z M1 13 L5.5 18 L10 13 Z" fill="#6f8fbf"/></svg>
<svg class="r" style="left:1253px;top:816px;" width="20" height="19" viewBox="0 0 20 19"><path d="M1 1 L1 15 L4.5 12 L7 18 L9 17 L6.5 11 L11 11 Z" fill="#fff" stroke="#333" stroke-width="0.8"/><path d="M11 12 C18 12, 19 3, 12 3" fill="none" stroke="#7ab4f0" stroke-width="2"/><path d="M14 0 L10 3 L14 6 Z" fill="#7ab4f0"/></svg>
<svg class="r" style="left:1283px;top:817px;" width="12" height="16" viewBox="0 0 12 16"><path d="M1 1 L1 14 L4.5 11 L7 16 L9 15 L6.5 10 L11 10 Z" fill="#fff" stroke="#333" stroke-width="0.8"/></svg>
<svg class="r" style="left:1303px;top:824px;" width="8" height="5" viewBox="0 0 8 5"><path d="M0 4.5 L4 0 L8 4.5 Z" fill="#f2f6fb"/></svg>
<svg class="r" style="left:1343px;top:824px;" width="8" height="5" viewBox="0 0 8 5"><path d="M0 4.5 L4 0 L8 4.5 Z" fill="#f2f6fb"/></svg>
<svg class="r" style="left:1384px;top:824px;" width="8" height="5" viewBox="0 0 8 5"><path d="M0 4.5 L4 0 L8 4.5 Z" fill="#f2f6fb"/></svg>
<svg class="r" style="left:1450px;top:824px;" width="8" height="5" viewBox="0 0 8 5"><path d="M0 4.5 L4 0 L8 4.5 Z" fill="#f2f6fb"/></svg>
<svg class="r" style="left:1320px;top:818px;" width="19" height="17" viewBox="0 0 19 17"><rect x="1" y="1" width="17" height="15" fill="none" stroke="#7ab4f0" stroke-width="2" stroke-dasharray="3.5 2.5"/></svg>
<svg class="r" style="left:1362px;top:816px;" width="18" height="19" viewBox="0 0 18 19"><path d="M9 1.5 L9 17.5 M1 9.5 L17 9.5" stroke="#7ab4f0" stroke-width="2"/><path d="M6 4.5 L9 1 L12 4.5 Z M6 14.5 L9 18 L12 14.5 Z M4 6.5 L0.5 9.5 L4 12.5 Z M14 6.5 L17.5 9.5 L14 12.5 Z" fill="#7ab4f0"/><ellipse cx="9" cy="9.5" rx="5.5" ry="3" fill="none" stroke="#7ab4f0" stroke-width="1.8"/></svg>
<svg class="r" style="left:1401px;top:816px;" width="18" height="19" viewBox="0 0 18 19"><path d="M9 1.5 L9 17.5 M1 9.5 L17 9.5" stroke="#7ab4f0" stroke-width="2"/><path d="M6 4.5 L9 1 L12 4.5 Z M6 14.5 L9 18 L12 14.5 Z M4 6.5 L0.5 9.5 L4 12.5 Z M14 6.5 L17.5 9.5 L14 12.5 Z" fill="#7ab4f0"/></svg>
<svg class="r" style="left:1427px;top:816px;" width="19" height="19" viewBox="0 0 19 19"><circle cx="7.5" cy="7.5" r="6" fill="#fff" stroke="#9ccaf8" stroke-width="2"/><path d="M12 12 L18 18" stroke="#7ab4f0" stroke-width="3" stroke-linecap="round"/></svg>
<svg class="r" style="left:1467px;top:817px;" width="19" height="17" viewBox="0 0 19 17"><path d="M18 2 L6 11" stroke="#6aaaf0" stroke-width="3.5"/><path d="M1 16 L3 7 L10 13 Z" fill="#6aaaf0"/></svg>
<svg class="r" style="left:1494px;top:817px;" width="19" height="17" viewBox="0 0 19 17"><path d="M1 15 L13 6" stroke="#6f8fbf" stroke-width="3.5"/><path d="M18 1 L16 10 L9 4 Z" fill="#6f8fbf"/></svg>
<svg class="r" style="left:0;top:0" width="1536" height="864" viewBox="0 0 1536 864"><defs><clipPath id="c1"><rect x="36" y="190" width="745" height="289"/></clipPath></defs><g clip-path="url(#c1)"><g transform="translate(240,185) scale(0.341556)"><polygon points="165,48 590,45 648,92 700,128 935,128 945,800 172,808 60,690 60,515 160,505" fill="#dbb9a9" stroke="#50483a" stroke-width="3.12" stroke-linejoin="round" /><polygon points="165,62 268,62 288,92 290,150 322,166 440,166 446,392 420,412 335,412 330,440 330,590 300,640 170,640" fill="#bdc7ad" stroke="#50483a" stroke-width="2.64" stroke-linejoin="round" /><polygon points="290,440 330,440 335,560 300,600 290,560" fill="#b0b99f" stroke="#50483a" stroke-width="2.16" stroke-linejoin="round" /><polygon points="155,195 205,188 232,215 232,320 205,340 155,340" fill="#e4d9ae" stroke="#50483a" stroke-width="2.64" stroke-linejoin="round" /><circle cx="182" cy="278" r="28" fill="#e4d9ae" stroke="#50483a" stroke-width="2.40"/><circle cx="178" cy="275" r="14" fill="#f0e8c8" stroke="#50483a" stroke-width="1.80"/><circle cx="185" cy="215" r="13" fill="#6a6258" stroke="#332" stroke-width="2.40"/><circle cx="185" cy="320" r="13" fill="#6a6258" stroke="#332" stroke-width="2.40"/><polygon points="222,218 262,190 368,300 325,345" fill="#e0b2a4" stroke="#50483a" stroke-width="2.64" stroke-linejoin="round" /><ellipse cx="295" cy="255" rx="22" ry="7" transform="rotate(45 295 255)" fill="#f6ecea" stroke="#4c4236" stroke-width="2.40"/><circle cx="262" cy="205" r="8" fill="#c8a848" stroke="#332" stroke-width="1.80"/><circle cx="350" cy="300" r="8" fill="#c8a848" stroke="#332" stroke-width="1.80"/><polygon points="352,165 430,165 445,185 445,305 410,312 352,270" fill="#e0b2a4" stroke="#50483a" stroke-width="2.64" stroke-linejoin="round" /><rect x="408" y="170" width="20" height="130" rx="0" fill="#8a90c8" stroke="#2a2a3a" stroke-width="2.40"/><rect x="414" y="180" width="8" height="110" rx="0" fill="#c4c8f0" stroke="#4a4aa0" stroke-width="1.20"/><circle cx="372" cy="185" r="11" fill="#c9ad50" stroke="#332" stroke-width="2.16"/><circle cx="372" cy="240" r="11" fill="#c9ad50" stroke="#332" stroke-width="2.16"/><rect x="205" y="345" width="85" height="95" rx="0" fill="#e0b2a4" stroke="#50483a" stroke-width="2.64"/><circle cx="258" cy="393" r="7" fill="#c87a6a" stroke="#5b3a30" stroke-width="1.80"/><circle cx="197" cy="375" r="6" fill="#f4e8e0" stroke="#4c4236" stroke-width="1.80"/><rect x="312" y="360" width="16" height="32" rx="0" fill="#efe7df" stroke="#50483a" stroke-width="2.16"/><polygon points="185,640 300,560 330,545 355,580 345,610 250,690 210,675" fill="#e0b2a4" stroke="#50483a" stroke-width="2.64" stroke-linejoin="round" /><polygon points="235,625 300,585 315,610 255,655" fill="#a8c8b8" stroke="#2a3a30" stroke-width="2.40" stroke-linejoin="round" /><circle cx="345" cy="595" r="6" fill="#d8c8b8" stroke="#4c4236" stroke-width="1.80"/><circle cx="265" cy="680" r="6" fill="#d8c8b8" stroke="#4c4236" stroke-width="1.80"/><circle cx="200" cy="100" r="31.5" fill="#d6d2d8" stroke="#50483a" stroke-width="2.64"/><circle cx="200" cy="100" r="23.4" fill="none" stroke="#8a8690" stroke-width="1.80"/><circle cx="200" cy="100" r="13.5" fill="#efe4cc" stroke="#2a2220" stroke-width="5.28"/><rect x="245.0" y="83.0" width="14" height="34" rx="7.0" fill="#ecece8" stroke="#50483a" stroke-width="2.40"/><circle cx="200" cy="565" r="29.4" fill="#d6d2d8" stroke="#50483a" stroke-width="2.64"/><circle cx="200" cy="565" r="21.8" fill="none" stroke="#8a8690" stroke-width="1.80"/><circle cx="200" cy="565" r="12.6" fill="#efe4cc" stroke="#2a2220" stroke-width="5.28"/><rect x="253.0" y="515.0" width="14" height="30" rx="7.0" fill="#ecece8" stroke="#50483a" stroke-width="2.40"/><circle cx="408" cy="378" r="29.4" fill="#d6d2d8" stroke="#50483a" stroke-width="2.64"/><circle cx="408" cy="378" r="21.8" fill="none" stroke="#8a8690" stroke-width="1.80"/><circle cx="408" cy="378" r="12.6" fill="#efe4cc" stroke="#2a2220" stroke-width="5.28"/><polygon points="478,90 642,90 645,160 645,412 480,412 478,160" fill="#bdc7ad" stroke="#50483a" stroke-width="2.64" stroke-linejoin="round" /><rect x="483" y="165" width="157" height="185" rx="0" fill="#b0b99f" stroke="#50483a" stroke-width="2.40"/><rect x="500" y="172" width="112" height="173" rx="14" fill="#e9b8a6" stroke="#50483a" stroke-width="2.64"/><line x1="555" y1="175" x2="555" y2="342" stroke="#b08878" stroke-width="2.40"/><line x1="556" y1="235" x2="556" y2="285" stroke="#222" stroke-width="2.88"/><circle cx="505" cy="125" r="27.3" fill="#d6d2d8" stroke="#50483a" stroke-width="2.64"/><circle cx="505" cy="125" r="20.3" fill="none" stroke="#8a8690" stroke-width="1.80"/><circle cx="505" cy="125" r="11.7" fill="#efe4cc" stroke="#2a2220" stroke-width="5.28"/><rect x="553.0" y="110.0" width="14" height="30" rx="7.0" fill="#ecece8" stroke="#50483a" stroke-width="2.40"/><circle cx="505" cy="378" r="27.3" fill="#d6d2d8" stroke="#50483a" stroke-width="2.64"/><circle cx="505" cy="378" r="20.3" fill="none" stroke="#8a8690" stroke-width="1.80"/><circle cx="505" cy="378" r="11.7" fill="#efe4cc" stroke="#2a2220" stroke-width="5.28"/><rect x="555.0" y="363.0" width="14" height="30" rx="7.0" fill="#ecece8" stroke="#50483a" stroke-width="2.40"/><circle cx="622" cy="378" r="27.3" fill="#d6d2d8" stroke="#50483a" stroke-width="2.64"/><circle cx="622" cy="378" r="20.3" fill="none" stroke="#8a8690" stroke-width="1.80"/><circle cx="622" cy="378" r="11.7" fill="#efe4cc" stroke="#2a2220" stroke-width="5.28"/><polygon points="395,442 680,442 690,470 690,545 690,700 600,718 570,718 570,650 555,650 555,690 380,690 380,545 395,530" fill="#bdc7ad" stroke="#50483a" stroke-width="2.64" stroke-linejoin="round" /><rect x="380" y="535" width="310" height="40" rx="0" fill="#bac4aa" stroke="#50483a" stroke-width="2.40"/><circle cx="422" cy="478" r="31.5" fill="#d6d2d8" stroke="#50483a" stroke-width="2.64"/><circle cx="422" cy="478" r="23.4" fill="none" stroke="#8a8690" stroke-width="1.80"/><circle cx="422" cy="478" r="13.5" fill="#efe4cc" stroke="#2a2220" stroke-width="5.28"/><circle cx="652" cy="478" r="31.5" fill="#d6d2d8" stroke="#50483a" stroke-width="2.64"/><circle cx="652" cy="478" r="23.4" fill="none" stroke="#8a8690" stroke-width="1.80"/><circle cx="652" cy="478" r="13.5" fill="#efe4cc" stroke="#2a2220" stroke-width="5.28"/><rect x="589.0" y="466.0" width="18" height="24" rx="9.0" fill="#ecece8" stroke="#50483a" stroke-width="2.40"/><rect x="430" y="578" width="68" height="82" rx="0" fill="#e0b2a4" stroke="#50483a" stroke-width="2.40"/><rect x="455" y="648" width="95" height="107" rx="0" fill="#e0b2a4" stroke="#50483a" stroke-width="2.40"/><rect x="470" y="700" width="45" height="30" rx="0" fill="#dfe8d8" stroke="#50483a" stroke-width="1.80"/><rect x="550" y="580" width="105" height="70" rx="0" fill="#c8c6c4" stroke="#50483a" stroke-width="2.40"/><circle cx="608" cy="614" r="14" fill="#f4f4f4" stroke="#333" stroke-width="2.40"/><circle cx="608" cy="614" r="4" fill="#333"/><rect x="580" y="650" width="110" height="70" rx="0" fill="#bdc7ad" stroke="#50483a" stroke-width="2.40"/><circle cx="652" cy="685" r="31.5" fill="#d6d2d8" stroke="#50483a" stroke-width="2.64"/><circle cx="652" cy="685" r="23.4" fill="none" stroke="#8a8690" stroke-width="1.80"/><circle cx="652" cy="685" r="13.5" fill="#efe4cc" stroke="#2a2220" stroke-width="5.28"/><rect x="593.0" y="671.0" width="14" height="28" rx="7.0" fill="#ecece8" stroke="#50483a" stroke-width="2.40"/><circle cx="370" cy="590" r="12" fill="#e8c0a8" stroke="#4c4236" stroke-width="2.16"/><circle cx="408" cy="606" r="5" fill="#5b4a3c"/><polygon points="700,168 922,165 925,376 880,380 872,410 880,440 925,445 930,700 712,700 706,560 700,300" fill="#bdc7ad" stroke="#50483a" stroke-width="2.64" stroke-linejoin="round" /><path d="M925 376 A40 34 0 0 0 925 446" fill="#dbb9a9" stroke="#50483a" stroke-width="2.64"/><line x1="829" y1="291" x2="925" y2="291" stroke="#50483a" stroke-width="2.16"/><line x1="829" y1="545" x2="927" y2="545" stroke="#50483a" stroke-width="2.16"/><polygon points="700,298 724,298 728,555 704,555" fill="#c8d1b8" stroke="#50483a" stroke-width="2.16" stroke-linejoin="round" /><polygon points="741,223 760,210 829,294 829,355 741,355" fill="#e0b2a4" stroke="#50483a" stroke-width="2.64" stroke-linejoin="round" /><rect x="725" y="355" width="127" height="145" rx="0" fill="#e0b2a4" stroke="#50483a" stroke-width="2.88"/><polygon points="744,501 829,501 829,572 762,637" fill="#e0b2a4" stroke="#50483a" stroke-width="2.64" stroke-linejoin="round" /><polygon points="752,210 775,195 838,262 815,282" fill="#9cc0b0" stroke="#2a3a30" stroke-width="2.40" stroke-linejoin="round" /><polygon points="760,620 820,570 838,590 775,640" fill="#9cc0b0" stroke="#2a3a30" stroke-width="2.40" stroke-linejoin="round" /><circle cx="740" cy="430" r="11" fill="#e8d8c8" stroke="#332" stroke-width="2.40"/><circle cx="830" cy="430" r="11" fill="#e8d8c8" stroke="#332" stroke-width="2.40"/><line x1="733" y1="437" x2="747" y2="423" stroke="#332" stroke-width="2.40"/><line x1="823" y1="437" x2="837" y2="423" stroke="#332" stroke-width="2.40"/><circle cx="842" cy="202" r="29.4" fill="#d6d2d8" stroke="#50483a" stroke-width="2.64"/><circle cx="842" cy="202" r="21.8" fill="none" stroke="#8a8690" stroke-width="1.80"/><circle cx="842" cy="202" r="12.6" fill="#efe4cc" stroke="#2a2220" stroke-width="5.28"/><rect x="781.0" y="186.0" width="14" height="28" rx="7.0" fill="#ecece8" stroke="#50483a" stroke-width="2.40"/><circle cx="738" cy="665" r="29.4" fill="#d6d2d8" stroke="#50483a" stroke-width="2.64"/><circle cx="738" cy="665" r="21.8" fill="none" stroke="#8a8690" stroke-width="1.80"/><circle cx="738" cy="665" r="12.6" fill="#efe4cc" stroke="#2a2220" stroke-width="5.28"/><rect x="788.0" y="650.0" width="14" height="30" rx="7.0" fill="#ecece8" stroke="#50483a" stroke-width="2.40"/><circle cx="900" cy="665" r="29.4" fill="#d6d2d8" stroke="#50483a" stroke-width="2.64"/><circle cx="900" cy="665" r="21.8" fill="none" stroke="#8a8690" stroke-width="1.80"/><circle cx="900" cy="665" r="12.6" fill="#efe4cc" stroke="#2a2220" stroke-width="5.28"/><circle cx="815" cy="325" r="5" fill="#c87a6a" stroke="#5b3a30" stroke-width="1.44"/><circle cx="815" cy="535" r="5" fill="#c87a6a" stroke="#5b3a30" stroke-width="1.44"/><line x1="172" y1="812" x2="172" y2="600" stroke="#3a9a4a" stroke-width="4.80"/><polygon points="160,710 184,710 172,660" fill="#1a8a2a"/><line x1="172" y1="812" x2="330" y2="806" stroke="#ff5a1a" stroke-width="6.00"/><polygon points="275,794 275,818 325,806" fill="#ff5a1a"/><circle cx="172" cy="812" r="10" fill="#2a6ae8"/><text x="372" y="818" font-size="30" fill="#ff7a4a" text-anchor="middle" font-family="Liberation Sans">x</text></g></g></svg>
<svg class="r" style="left:0;top:0" width="1536" height="864" viewBox="0 0 1536 864"><defs><clipPath id="c2"><rect x="789" y="190" width="745" height="289"/></clipPath></defs><g clip-path="url(#c2)"><g transform="translate(1000,210) scale(0.312500)"><polygon points="120,570 510,808 1000,548 1000,562 512,825 120,585" fill="#d9ab98" stroke="#50483a" stroke-width="3.84" stroke-linejoin="round" /><polygon points="160,478 262,430 420,398 700,300 862,362 892,392 882,420 995,535 1000,548 510,808 120,570 118,555" fill="#dbb9a9" stroke="#50483a" stroke-width="4.16" stroke-linejoin="round" /><polygon points="385,625 560,565 740,520 800,500 960,520 965,545 575,748 388,655" fill="#bdc7ad" stroke="#50483a" stroke-width="4.16" stroke-linejoin="round" /><polygon points="465,665 600,610 750,635 575,725" fill="#c6d0b8" stroke="#50483a" stroke-width="3.20" stroke-linejoin="round" /><path d="M722 618 A36 26 0 0 0 798 605" fill="#dbb9a9" stroke="#4c4236" stroke-width="3.84"/><polygon points="720,430 860,360 885,400 960,510 800,565 700,520" fill="#bdc7ad" stroke="#50483a" stroke-width="3.84" stroke-linejoin="round" /><polygon points="380,390 400,330 440,290 500,250 560,205 600,215 615,300 650,280 720,300 800,330 860,362 830,420 700,470 600,520 520,525 420,470" fill="#c5cfb5" stroke="#50483a" stroke-width="3.84" stroke-linejoin="round" /><polygon points="575,190 600,215 625,330 600,340 560,230" fill="#b0b99f" stroke="#50483a" stroke-width="3.52" stroke-linejoin="round" /><polygon points="370,380 430,330 470,300 520,265 575,300 600,350 625,470 560,505 520,520 470,470 380,430" fill="#bdc7ad" stroke="#50483a" stroke-width="3.84" stroke-linejoin="round" /><polygon points="440,205 540,158 582,188 495,240" fill="#cdd5bd" stroke="#50483a" stroke-width="3.84" stroke-linejoin="round" /><polygon points="440,205 495,240 495,255 440,220" fill="#b0b99f" stroke="#50483a" stroke-width="3.20" stroke-linejoin="round" /><polygon points="395,272 448,245 494,268 440,296" fill="#e8c2b4" stroke="#50483a" stroke-width="3.84" stroke-linejoin="round" /><polygon points="395,272 440,296 434,330 398,312" fill="#e0b2a4" stroke="#50483a" stroke-width="3.84" stroke-linejoin="round" /><polygon points="440,296 494,268 470,318 434,330" fill="#d4a494" stroke="#50483a" stroke-width="3.52" stroke-linejoin="round" /><polygon points="455,100 492,85 522,190 490,210" fill="#e4d9ae" stroke="#50483a" stroke-width="3.84" stroke-linejoin="round" /><ellipse cx="474" cy="78" rx="13" ry="8" fill="#e8ddb8" stroke="#4c4236" stroke-width="3.20"/><rect x="467" y="78" width="14" height="20" fill="#e8ddb8" stroke="#4c4236" stroke-width="3.20"/><circle cx="462" cy="205" r="11" fill="#7a706a" stroke="#332" stroke-width="3.20"/><circle cx="540" cy="165" r="11" fill="#7a706a" stroke="#332" stroke-width="3.20"/><polygon points="515,238 560,200 606,292 600,392 550,382 520,300" fill="#e0b2a4" stroke="#50483a" stroke-width="3.84" stroke-linejoin="round" /><polygon points="515,238 520,300 550,382 545,300" fill="#d9a898" stroke="#50483a" stroke-width="3.20" stroke-linejoin="round" /><circle cx="580" cy="250" r="8" fill="#f0e0d8" stroke="#4c4236" stroke-width="2.56"/><circle cx="492" cy="300" r="14" fill="#c8c2cc" stroke="#332" stroke-width="3.20"/><polygon points="612,318 690,272 770,300 808,360 790,420 730,440 640,400" fill="#e4b4a4" stroke="#50483a" stroke-width="4.16" stroke-linejoin="round" /><path d="M640 300 C650 330, 660 370, 640 400" fill="none" stroke="#b88878" stroke-width="3.20"/><ellipse cx="742" cy="372" rx="62" ry="66" transform="rotate(-25 742 372)" fill="#e9bcac" stroke="#50483a" stroke-width="4.16"/><ellipse cx="745" cy="375" rx="46" ry="50" transform="rotate(-25 745 375)" fill="#4a3a3a" stroke="#332" stroke-width="3.52"/><ellipse cx="738" cy="378" rx="36" ry="40" fill="#b4c2dc" stroke="#3a4a7a" stroke-width="3.20"/><line x1="722" y1="350" x2="735" y2="405" stroke="#1a2a1a" stroke-width="3.84"/><line x1="705" y1="380" x2="770" y2="372" stroke="#1a2a1a" stroke-width="3.84"/><polygon points="610,300 640,262 690,255 700,300 660,330" fill="#bdc7ad" stroke="#50483a" stroke-width="3.20" stroke-linejoin="round" /><circle cx="650" cy="262" r="11" fill="#d8d0d8" stroke="#332" stroke-width="3.20"/><polygon points="555,470 700,400 712,412 565,485" fill="#a8b898" stroke="#50483a" stroke-width="3.20" stroke-linejoin="round" /><polygon points="600,490 715,430 770,465 660,520" fill="#edc4b4" stroke="#50483a" stroke-width="3.84" stroke-linejoin="round" /><polygon points="600,490 660,520 665,595 610,570" fill="#e0b2a4" stroke="#50483a" stroke-width="3.84" stroke-linejoin="round" /><polygon points="660,520 770,465 778,545 665,595" fill="#e2ad9c" stroke="#50483a" stroke-width="3.84" stroke-linejoin="round" /><polygon points="720,415 800,380 840,405 770,450" fill="#edc4b4" stroke="#50483a" stroke-width="3.52" stroke-linejoin="round" /><polygon points="770,450 840,405 845,475 780,510" fill="#e2ad9c" stroke="#50483a" stroke-width="3.52" stroke-linejoin="round" /><circle cx="698" cy="482" r="10" fill="#5a4a44" stroke="#332" stroke-width="3.20"/><polygon points="800,398 835,388 852,478 818,492" fill="#8fb0a0" stroke="#2a3a30" stroke-width="3.84" stroke-linejoin="round" /><polygon points="862,372 892,392 882,420 860,415" fill="#e0b2a4" stroke="#50483a" stroke-width="3.20" stroke-linejoin="round" /><polygon points="510,555 570,540 602,560 600,618 545,626 515,600" fill="#8fb0a0" stroke="#2a3a30" stroke-width="3.84" stroke-linejoin="round" /><polygon points="510,555 570,540 602,560 545,572" fill="#b0cec0" stroke="#2a3a30" stroke-width="3.20" stroke-linejoin="round" /><polygon points="390,418 442,392 500,420 478,442" fill="#e8c8cc" stroke="#50483a" stroke-width="3.84" stroke-linejoin="round" /><polygon points="390,418 478,442 492,606 410,588" fill="#e2bcc4" stroke="#50483a" stroke-width="3.84" stroke-linejoin="round" /><polygon points="478,442 500,420 515,590 492,606" fill="#cfa8b0" stroke="#50483a" stroke-width="3.84" stroke-linejoin="round" /><ellipse cx="443" cy="415" rx="14" ry="7" fill="#d8d0c8" stroke="#333" stroke-width="3.20"/><rect x="436" y="395" width="14" height="20" fill="#3a3030"/><polygon points="430,372 470,350 545,420 548,500 520,520 510,440" fill="#c9d3b9" stroke="#50483a" stroke-width="3.84" stroke-linejoin="round" /><polygon points="540,435 605,420 615,450 550,470" fill="#e0b2a4" stroke="#50483a" stroke-width="3.20" stroke-linejoin="round" /><polygon points="250,328 318,298 355,322 288,352" fill="#efd0c4" stroke="#50483a" stroke-width="3.84" stroke-linejoin="round" /><polygon points="250,328 288,352 385,618 305,585" fill="#e0b2a4" stroke="#50483a" stroke-width="4.16" stroke-linejoin="round" /><polygon points="288,352 355,322 418,602 385,618" fill="#d8a898" stroke="#50483a" stroke-width="4.16" stroke-linejoin="round" /><ellipse cx="322" cy="345" rx="14" ry="22" fill="#f4e8e4" stroke="#4c4236" stroke-width="3.20"/><polygon points="305,470 340,455 370,540 330,560" fill="#ddb0a0" stroke="#50483a" stroke-width="3.20" stroke-linejoin="round" /><circle cx="335" cy="490" r="12" fill="#d0ccd4" stroke="#332" stroke-width="3.84"/><circle cx="335" cy="487" r="6" fill="#ece8e0" stroke="#332" stroke-width="2.40"/><circle cx="312" cy="570" r="12" fill="#d0ccd4" stroke="#332" stroke-width="3.84"/><circle cx="312" cy="567" r="6" fill="#ece8e0" stroke="#332" stroke-width="2.40"/><circle cx="360" cy="600" r="12" fill="#d0ccd4" stroke="#332" stroke-width="3.84"/><circle cx="360" cy="597" r="6" fill="#ece8e0" stroke="#332" stroke-width="2.40"/><circle cx="435" cy="640" r="12" fill="#d0ccd4" stroke="#332" stroke-width="3.84"/><circle cx="435" cy="637" r="6" fill="#ece8e0" stroke="#332" stroke-width="2.40"/><circle cx="488" cy="655" r="12" fill="#d0ccd4" stroke="#332" stroke-width="3.84"/><circle cx="488" cy="652" r="6" fill="#ece8e0" stroke="#332" stroke-width="2.40"/><circle cx="575" cy="705" r="12" fill="#d0ccd4" stroke="#332" stroke-width="3.84"/><circle cx="575" cy="702" r="6" fill="#ece8e0" stroke="#332" stroke-width="2.40"/><circle cx="888" cy="512" r="12" fill="#d0ccd4" stroke="#332" stroke-width="3.84"/><circle cx="888" cy="509" r="6" fill="#ece8e0" stroke="#332" stroke-width="2.40"/><circle cx="550" cy="440" r="12" fill="#d0ccd4" stroke="#332" stroke-width="3.84"/><circle cx="550" cy="437" r="6" fill="#ece8e0" stroke="#332" stroke-width="2.40"/><circle cx="655" cy="455" r="12" fill="#d0ccd4" stroke="#332" stroke-width="3.84"/><circle cx="655" cy="452" r="6" fill="#ece8e0" stroke="#332" stroke-width="2.40"/><polygon points="235,450 270,438 295,520 262,530" fill="#bdc7ad" stroke="#50483a" stroke-width="3.20" stroke-linejoin="round" /><line x1="350" y1="318" x2="378" y2="305" stroke="#4c4236" stroke-width="6.40"/><line x1="120" y1="560" x2="100" y2="440" stroke="#4a8ae8" stroke-width="6.40"/><polygon points="88,478 112,470 95,425" fill="#3a7ae0"/><text x="78" y="395" font-size="34" fill="#4a70e0" text-anchor="middle" font-family="Liberation Sans">z</text><line x1="120" y1="560" x2="240" y2="505" stroke="#3a8a4a" stroke-width="8.00"/><polygon points="205,505 245,495 215,530" fill="#1a7a2a"/><line x1="120" y1="565" x2="215" y2="615" stroke="#ff5a1a" stroke-width="9.60"/><polygon points="170,585 220,618 185,625" fill="#ff5a1a"/><text x="238" y="645" font-size="32" fill="#ff7a4a" text-anchor="middle" font-family="Liberation Sans">x</text></g></g></svg>
<svg class="r" style="left:0;top:0" width="1536" height="864" viewBox="0 0 1536 864"><defs><clipPath id="c3"><rect x="36" y="487" width="745" height="287"/></clipPath></defs><g clip-path="url(#c3)"><g transform="translate(180,480) scale(0.397135)"><polygon points="380,650 640,690 860,700 1260,700 1300,740 380,740" fill="#b7bca1" stroke="#50483a" stroke-width="3.12" stroke-linejoin="round" /><polygon points="375,655 500,655 505,740 375,740" fill="#d9ada2" stroke="#50483a" stroke-width="3.12" stroke-linejoin="round" /><polygon points="625,218 640,208 785,210 800,235 802,322 625,322" fill="#e9b6a6" stroke="#50483a" stroke-width="3.12" stroke-linejoin="round" /><line x1="705" y1="212" x2="705" y2="320" stroke="#c89888" stroke-width="2.40"/><path d="M700 210 L708 196 L712 210" fill="none" stroke="#888" stroke-width="1.80"/><polygon points="478,238 528,228 522,700 498,698 490,450" fill="#d9a898" stroke="#50483a" stroke-width="3.12" stroke-linejoin="round" /><polygon points="528,228 625,232 632,272 636,698 522,700" fill="#d9ada2" stroke="#50483a" stroke-width="3.36" stroke-linejoin="round" /><polygon points="528,228 625,232 628,270 525,272" fill="#ecc8b8" stroke="#50483a" stroke-width="2.64" stroke-linejoin="round" /><ellipse cx="556" cy="326" rx="9" ry="9" fill="#f0dcd0" stroke="#4c4236" stroke-width="2.40"/><circle cx="575" cy="545" r="32" fill="#dcd6d0" stroke="#4c4236" stroke-width="3.12"/><polygon points="560,530 590,530 598,545 590,562 560,562 552,545" fill="#e8d8a8" stroke="#4c4236" stroke-width="2.40"/><polygon points="632,318 855,318 862,742 640,742" fill="#b7bca1" stroke="#50483a" stroke-width="3.36" stroke-linejoin="round" /><polygon points="645,345 805,345 806,395 645,395" fill="#c8c0cc" stroke="#50483a" stroke-width="2.88" stroke-linejoin="round" /><polygon points="645,395 806,395 805,695 650,695" fill="#ccacb2" stroke="#50483a" stroke-width="3.36" stroke-linejoin="round" /><rect x="725" y="330" width="38" height="48" rx="6" fill="#3a3432" stroke="#1a1412" stroke-width="2.40"/><ellipse cx="745" cy="372" rx="34" ry="14" fill="none" stroke="#4c4236" stroke-width="2.40"/><line x1="706" y1="310" x2="706" y2="350" stroke="#1a3a1a" stroke-width="3.60"/><polygon points="860,425 1262,438 1298,450 1300,742 862,742" fill="#b7bca1" stroke="#50483a" stroke-width="3.36" stroke-linejoin="round" /><polygon points="862,520 1220,520 1230,680 862,680" fill="#bcc2a8" stroke="#50483a" stroke-width="2.40" stroke-linejoin="round" /><polygon points="882,302 948,302 952,660 898,668" fill="#c2c8ae" stroke="#50483a" stroke-width="3.36" stroke-linejoin="round" /><polygon points="882,302 910,302 912,665 898,668" fill="#b4c0a4" stroke="#50483a" stroke-width="2.64" stroke-linejoin="round" /><polygon points="980,268 1018,262 1115,302 1112,346 980,346" fill="#d9ada2" stroke="#50483a" stroke-width="3.36" stroke-linejoin="round" /><polygon points="1010,268 1030,255 1125,298 1110,322" fill="#8fb0a0" stroke="#2a3a30" stroke-width="3.12" stroke-linejoin="round" /><polygon points="930,346 1120,346 1130,580 945,650 930,440" fill="#d9ada2" stroke="#50483a" stroke-width="3.36" stroke-linejoin="round" /><polygon points="950,450 1120,440 1125,580 960,640" fill="#e4b2a2" stroke="#50483a" stroke-width="2.64" stroke-linejoin="round" /><ellipse cx="1088" cy="330" rx="14" ry="8" fill="#f0dcd0" stroke="#4c4236" stroke-width="2.40"/><ellipse cx="1062" cy="468" rx="14" ry="8" fill="#f0dcd0" stroke="#4c4236" stroke-width="2.40"/><polygon points="962,530 1075,498 1087,630 992,662" fill="#7fa898" stroke="#1e3028" stroke-width="3.36" stroke-linejoin="round" /><polygon points="962,530 1075,498 1078,512 966,545" fill="#a8c8b8" stroke="#1e3028" stroke-width="2.40" stroke-linejoin="round" /><circle cx="962" cy="378" r="26" fill="#d8d0c8" stroke="#2a2420" stroke-width="2.88"/><circle cx="962" cy="373" r="14" fill="#8a8480" stroke="#2a2420" stroke-width="2.40"/><circle cx="1100" cy="378" r="26" fill="#d8d0c8" stroke="#2a2420" stroke-width="2.88"/><circle cx="1100" cy="373" r="14" fill="#8a8480" stroke="#2a2420" stroke-width="2.40"/><circle cx="1152" cy="440" r="26" fill="#d8d0c8" stroke="#2a2420" stroke-width="2.88"/><circle cx="1152" cy="435" r="14" fill="#8a8480" stroke="#2a2420" stroke-width="2.40"/><path d="M1135 600 A55 35 0 0 1 1245 590 L1240 620 A50 30 0 0 0 1140 615 Z" fill="#d8d6c8" stroke="#4c4236" stroke-width="2.88"/><polygon points="1245,440 1298,450 1255,742 1200,742" fill="#d9ada2" stroke="#50483a" stroke-width="3.12" stroke-linejoin="round" /><path d="M1240 600 L1280 630 L1225 640" fill="none" stroke="#999" stroke-width="3.00"/><line x1="1120" y1="320" x2="1125" y2="465" stroke="#3a4ae8" stroke-width="7.20" stroke-dasharray="28 14"/><line x1="1050" y1="392" x2="1130" y2="390" stroke="#ff5a1a" stroke-width="7.20"/><line x1="1160" y1="392" x2="1198" y2="392" stroke="#ff5a1a" stroke-width="6.00"/><circle cx="420" cy="720" r="22" fill="#d8d0c8" stroke="#2a2420" stroke-width="3.12"/><circle cx="585" cy="715" r="22" fill="#d8d0c8" stroke="#2a2420" stroke-width="3.12"/><circle cx="910" cy="730" r="22" fill="#d8d0c8" stroke="#2a2420" stroke-width="3.12"/></g><g transform="translate(130,480) scale(0.347293)"><polygon points="28,770 120,760 210,745 245,852 28,852" fill="#dbb9a9" stroke="#50483a" stroke-width="3.36" stroke-linejoin="round" /><polygon points="250,275 385,240 388,257 537,329 600,380 610,852 215,852 215,760 245,580" fill="#b7bca1" stroke="#50483a" stroke-width="3.36" stroke-linejoin="round" /><polygon points="255,300 320,295 318,610 300,650 255,640" fill="#b4c0a4" stroke="#50483a" stroke-width="2.64" stroke-linejoin="round" /><polygon points="250,250 360,198 390,218 385,272 330,298 250,298" fill="#e4d9ae" stroke="#50483a" stroke-width="3.36" stroke-linejoin="round" /><rect x="255" y="32" width="100" height="210" fill="#ddd0a8" stroke="#4c4236" stroke-width="3.12"/><rect x="270" y="32" width="30" height="210" fill="#ebe2c4"/><ellipse cx="305" cy="32" rx="50" ry="12" fill="#e8ddb8" stroke="#4c4236" stroke-width="2.88"/><circle cx="298" cy="262" r="24" fill="#6a6460" stroke="#2a2420" stroke-width="3.60"/><circle cx="298" cy="262" r="11" fill="#d8d0c8"/><polygon points="387,231 583,322 537,329 387,257" fill="#d9ada2" stroke="#50483a" stroke-width="3.36" stroke-linejoin="round" /><polygon points="537,329 583,322 600,434 565,541 546,453" fill="#cfa196" stroke="#50483a" stroke-width="3.12" stroke-linejoin="round" /><polygon points="548,440 598,425 600,445 552,460" fill="#e0b8ae" stroke="#50483a" stroke-width="2.16" stroke-linejoin="round" /><polygon points="510,335 540,330 545,420 515,425" fill="#c2c8ae" stroke="#50483a" stroke-width="2.40" stroke-linejoin="round" /><polygon points="515,350 535,345 538,385 518,388" fill="#e0bcb2" stroke="#50483a" stroke-width="2.16" stroke-linejoin="round" /><polygon points="318,332 470,332 462,608 318,608" fill="#d9ada2" stroke="#50483a" stroke-width="3.36" stroke-linejoin="round" /><polygon points="318,332 470,332 470,395 318,395" fill="#eac6b8" stroke="#50483a" stroke-width="2.64" stroke-linejoin="round" /><ellipse cx="408" cy="372" rx="18" ry="11" fill="#efd8cc" stroke="#4c4236" stroke-width="2.40"/><circle cx="402" cy="552" r="44" fill="#e6b8aa" stroke="#4c4236" stroke-width="2.88"/><circle cx="400" cy="558" r="30" fill="#e0c8e0" stroke="#4a3a4a" stroke-width="3.12"/><circle cx="400" cy="558" r="14" fill="#c8a8c8" stroke="#4a3a4a" stroke-width="1.92"/><polygon points="445,395 505,395 510,655 450,655" fill="#c4caaf" stroke="#50483a" stroke-width="2.88" stroke-linejoin="round" /><polygon points="598,468 690,468 692,758 600,752" fill="#b7bca1" stroke="#50483a" stroke-width="3.36" stroke-linejoin="round" /><ellipse cx="638" cy="512" rx="14" ry="8" fill="#3a3a30"/><polygon points="560,575 592,570 595,690 565,695" fill="#d9ada2" stroke="#50483a" stroke-width="2.64" stroke-linejoin="round" /><polygon points="280,705 470,652 520,690 545,852 285,852" fill="#d9ada2" stroke="#50483a" stroke-width="3.36" stroke-linejoin="round" /><polygon points="325,702 440,655 468,715 345,762" fill="#8fb0a0" stroke="#2a3a30" stroke-width="3.12" stroke-linejoin="round" /><polygon points="325,702 440,655 455,672 338,720" fill="#b0cec0" stroke="#2a3a30" stroke-width="2.40" stroke-linejoin="round" /><circle cx="515" cy="745" r="22" fill="#cfcbd2" stroke="#2a2420" stroke-width="3.60"/><circle cx="362" cy="820" r="22" fill="#cfcbd2" stroke="#2a2420" stroke-width="3.60"/><circle cx="270" cy="745" r="20" fill="#e0d8c8" stroke="#2a2420" stroke-width="3.12"/><polygon points="575,745 692,745 700,852 575,852" fill="#d9ada2" stroke="#50483a" stroke-width="3.12" stroke-linejoin="round" /><text x="185" y="830" font-size="30" fill="#5a6ae0" text-anchor="middle" font-family="Liberation Sans">z</text></g></g></svg>
<svg class="r" style="left:0;top:0" width="1536" height="864" viewBox="0 0 1536 864"><defs><clipPath id="c4"><rect x="789" y="487" width="745" height="287"/></clipPath></defs><g clip-path="url(#c4)"><g transform="translate(900,500) scale(0.414062)"><polygon points="40,584 890,584 1340,642 1490,662 1490,690 514,690 40,590" fill="#978170" stroke="#50483a" stroke-width="3.12" stroke-linejoin="round" /><ellipse cx="200" cy="598" rx="10" ry="3" fill="#6a4a3a"/><ellipse cx="265" cy="602" rx="10" ry="3" fill="#6a4a3a"/><ellipse cx="480" cy="598" rx="10" ry="3" fill="#6a4a3a"/><ellipse cx="540" cy="600" rx="10" ry="3" fill="#6a4a3a"/><ellipse cx="620" cy="640" rx="10" ry="3" fill="#6a4a3a"/><ellipse cx="690" cy="640" rx="10" ry="3" fill="#6a4a3a"/><ellipse cx="780" cy="604" rx="10" ry="3" fill="#6a4a3a"/><ellipse cx="830" cy="606" rx="10" ry="3" fill="#6a4a3a"/><ellipse cx="880" cy="644" rx="10" ry="3" fill="#6a4a3a"/><ellipse cx="990" cy="650" rx="10" ry="3" fill="#6a4a3a"/><polygon points="35,538 360,538 380,540 890,555 1379,641 1470,662 1470,676 890,588 35,582" fill="#e2c2b2" stroke="#50483a" stroke-width="3.12" stroke-linejoin="round" /><line x1="300" y1="540" x2="300" y2="582" stroke="#4c4236" stroke-width="2.88"/><line x1="385" y1="540" x2="385" y2="583" stroke="#4c4236" stroke-width="2.88"/><line x1="890" y1="556" x2="890" y2="584" stroke="#4c4236" stroke-width="2.88"/><polygon points="890,555 940,520 1150,548 1372,600 1379,641" fill="#a9b39b" stroke="#50483a" stroke-width="2.88" stroke-linejoin="round" /><line x1="1020" y1="575" x2="1370" y2="632" stroke="#50483a" stroke-width="2.16"/><polygon points="85,510 350,508 358,540 85,540" fill="#bdc7ad" stroke="#50483a" stroke-width="3.12" stroke-linejoin="round" /><polygon points="350,505 600,500 690,530 790,505 935,510 942,560 890,556 380,540 350,540" fill="#bdc7ad" stroke="#50483a" stroke-width="3.12" stroke-linejoin="round" /><polygon points="335,318 440,325 447,455 345,452" fill="#e0b2a4" stroke="#50483a" stroke-width="3.36" stroke-linejoin="round" /><circle cx="378" cy="382" r="30" fill="#e2b0a0" stroke="#4c4236" stroke-width="2.88"/><path d="M358 382 L398 382 M378 360 L378 404 M362 370 L394 370 M362 394 L394 394" stroke="#7a5a4a" stroke-width="2.16"/><polygon points="275,322 340,314 346,442 282,447" fill="#7fa898" stroke="#1e3028" stroke-width="3.36" stroke-linejoin="round" /><polygon points="288,322 340,316 344,440 296,444" fill="#8fb4a4" stroke="#1e3028" stroke-width="1.80" stroke-linejoin="round" /><polygon points="330,450 430,455 422,498 335,488" fill="#e0b2a4" stroke="#50483a" stroke-width="2.88" stroke-linejoin="round" /><polygon points="440,318 470,312 482,440 448,445" fill="#bdc7ad" stroke="#50483a" stroke-width="2.88" stroke-linejoin="round" /><path d="M480 310 C490 275, 530 262, 640 268 L660 272 C700 280, 728 330, 728 390 C728 450, 690 500, 640 500 L530 470 C495 455, 478 420, 478 370 Z" fill="#e9b7a7" stroke="#4c4236" stroke-width="3.36"/><ellipse cx="645" cy="385" rx="82" ry="112" fill="#e6b3a3" stroke="#4c4236" stroke-width="3.12"/><ellipse cx="655" cy="395" rx="58" ry="86" fill="#d9a292" stroke="#4c4236" stroke-width="2.88"/><path d="M540 268 C545 280, 545 460, 540 470" fill="none" stroke="#c89888" stroke-width="2.40"/><path d="M480 420 L640 420" stroke="#c08878" stroke-width="2.16"/><path d="M570 265 C590 245, 630 250, 640 268" fill="none" stroke="#bbb" stroke-width="2.40"/><line x1="600" y1="360" x2="600" y2="400" stroke="#1a3a1a" stroke-width="2.88"/><circle cx="425" cy="322" r="14" fill="#e0d8b8" stroke="#4c4236" stroke-width="2.40"/><polygon points="420,440 632,440 642,542 420,542" fill="#bdc7ad" stroke="#50483a" stroke-width="3.36" stroke-linejoin="round" /><polygon points="420,440 632,440 635,470 420,472" fill="#c9d3b9" stroke="#50483a" stroke-width="2.40" stroke-linejoin="round" /><polygon points="905,228 940,226 966,242 966,498 905,500" fill="#b0b99f" stroke="#50483a" stroke-width="3.36" stroke-linejoin="round" /><polygon points="702,222 905,228 905,500 850,512 780,505 705,495" fill="#bdc7ad" stroke="#50483a" stroke-width="3.36" stroke-linejoin="round" /><circle cx="798" cy="268" r="26" fill="#d0aca0" stroke="#4c4236" stroke-width="3.12"/><circle cx="798" cy="268" r="14" fill="#c89080" stroke="#5b3a30" stroke-width="2.40"/><rect x="826" y="206" width="36" height="20" rx="4" fill="#4a4440" stroke="#222" stroke-width="2.40"/><polygon points="678,345 720,340 725,470 780,482 790,365 826,360 822,502 780,520 680,530" fill="#e0b2a4" stroke="#50483a" stroke-width="3.36" stroke-linejoin="round" /><ellipse cx="762" cy="408" rx="32" ry="72" fill="#ccd0de" stroke="#6a6a80" stroke-width="1.92"/><path d="M735 370 C740 340, 770 330, 790 350" fill="none" stroke="#2a3ad0" stroke-width="3.60"/><polygon points="720,340 735,345 740,470 725,470" fill="#d9a898" stroke="#50483a" stroke-width="2.40" stroke-linejoin="round" /><ellipse cx="760" cy="488" rx="15" ry="10" fill="#e8dcb8" stroke="#4c4236" stroke-width="2.40"/><ellipse cx="790" cy="488" rx="15" ry="10" fill="#e8dcb8" stroke="#4c4236" stroke-width="2.40"/><ellipse cx="815" cy="488" rx="15" ry="10" fill="#e8dcb8" stroke="#4c4236" stroke-width="2.40"/><polygon points="888,308 975,300 952,500 872,505" fill="#e0b2a4" stroke="#50483a" stroke-width="3.36" stroke-linejoin="round" /><ellipse cx="910" cy="400" rx="10" ry="34" fill="#f0dcd0" stroke="#4c4236" stroke-width="2.40"/><circle cx="920" cy="325" r="14" fill="#e0cc98" stroke="#4c4236" stroke-width="2.40"/><circle cx="875" cy="405" r="14" fill="#e0cc98" stroke="#4c4236" stroke-width="2.40"/><circle cx="895" cy="460" r="14" fill="#e0cc98" stroke="#4c4236" stroke-width="2.40"/><polygon points="988,78 1158,95 1152,305 965,305" fill="#e0b2a4" stroke="#50483a" stroke-width="3.36" stroke-linejoin="round" /><circle cx="992" cy="112" r="10" fill="#c87a6a" stroke="#5b3a30" stroke-width="2.40"/><ellipse cx="1120" cy="132" rx="10" ry="15" fill="#f0dcd0" stroke="#4c4236" stroke-width="2.40"/><polygon points="940,282 1030,282 1125,300 1145,560 1052,582 935,560" fill="#bdc7ad" stroke="#50483a" stroke-width="3.36" stroke-linejoin="round" /><polygon points="1030,282 1125,300 1145,560 1052,582 1040,300" fill="#b0b99f" stroke="#50483a" stroke-width="2.88" stroke-linejoin="round" /><polygon points="1045,300 1090,300 1095,550 1050,555" fill="#cdd6bd" stroke="#50483a" stroke-width="2.40" stroke-linejoin="round" /><rect x="1058" y="335" width="22" height="55" fill="#a8843a" stroke="#3a2a1a" stroke-width="2.40"/><rect x="1025" y="92" width="85" height="178" fill="#ddd0a8" stroke="#4c4236" stroke-width="3.12"/><rect x="1040" y="95" width="30" height="172" fill="#ebe2c4"/><ellipse cx="1067" cy="92" rx="42" ry="10" fill="#e8ddb8" stroke="#4c4236" stroke-width="2.64"/><rect x="1060" y="52" width="40" height="42" fill="#e4d8b0" stroke="#4c4236" stroke-width="2.64"/><ellipse cx="1080" cy="54" rx="20" ry="6" fill="#efe6c8" stroke="#4c4236" stroke-width="2.40"/><polygon points="972,265 1000,258 1145,282 1140,302 970,290" fill="#e0d8b4" stroke="#50483a" stroke-width="2.88" stroke-linejoin="round" /><ellipse cx="1018" cy="255" rx="22" ry="12" fill="#e8dcb8" stroke="#4c4236" stroke-width="2.40"/><ellipse cx="1112" cy="270" rx="18" ry="10" fill="#e8dcb8" stroke="#4c4236" stroke-width="2.40"/><ellipse cx="1125" cy="262" rx="14" ry="22" fill="none" stroke="#4c4236" stroke-width="2.40"/><polygon points="1135,342 1170,355 1152,552 1110,548" fill="#e0b2a4" stroke="#50483a" stroke-width="3.12" stroke-linejoin="round" /><circle cx="1133" cy="460" r="6" fill="#c87a6a"/><circle cx="1118" cy="522" r="6" fill="#c87a6a"/><polygon points="1145,470 1200,520 1290,545 1372,558 1372,605 1200,592 1145,560" fill="#bdc7ad" stroke="#50483a" stroke-width="3.12" stroke-linejoin="round" /><path d="M1185 545 L1215 485 L1300 508 L1310 565 L1280 578 L1200 560 Z" fill="#f8f8f6" stroke="none"/><path d="M1185 545 L1215 485 L1300 508 L1310 560" fill="none" stroke="#333" stroke-width="2.64"/><polygon points="1235,552 1248,545 1245,560" fill="#222"/><circle cx="1158" cy="548" r="7" fill="#fff" stroke="#333" stroke-width="2.40"/><ellipse cx="212" cy="503" rx="28" ry="8" fill="#d0c8b0" stroke="#4c4236" stroke-width="2.40"/><rect x="194" y="483" width="36" height="18" fill="#e8dcb8" stroke="#4c4236" stroke-width="2.40"/><ellipse cx="552" cy="498" rx="28" ry="8" fill="#d0c8b0" stroke="#4c4236" stroke-width="2.40"/><rect x="534" y="478" width="36" height="18" fill="#e8dcb8" stroke="#4c4236" stroke-width="2.40"/><ellipse cx="900" cy="506" rx="28" ry="8" fill="#d0c8b0" stroke="#4c4236" stroke-width="2.40"/><rect x="882" y="486" width="36" height="18" fill="#e8dcb8" stroke="#4c4236" stroke-width="2.40"/><ellipse cx="1282" cy="593" rx="28" ry="8" fill="#d0c8b0" stroke="#4c4236" stroke-width="2.40"/><rect x="1264" y="573" width="36" height="18" fill="#e8dcb8" stroke="#4c4236" stroke-width="2.40"/><line x1="1522" y1="580" x2="1515" y2="680" stroke="#4a8ae8" stroke-width="6.00"/><polygon points="1510,620 1530,615 1522,570" fill="#3a7ae0"/></g></g></svg>
<svg class="r" style="left:80px;top:655px;" width="75" height="75" viewBox="0 0 75 75"><text x="19" y="12" font-size="13" font-weight="bold" fill="#2a4ad0" text-anchor="middle" font-family="Liberation Sans">z</text><line x1="19" y1="40" x2="19" y2="22" stroke="#2a5ae0" stroke-width="2"/><polygon points="15,26 23,26 19,16" fill="#2a5ae0"/><path d="M7 44 L12 40 L30 40 L32 44 L32 66 L28 69 L8 69 Z" fill="#e8eef8" stroke="#b8c4d8" stroke-width="1"/><circle cx="19" cy="43" r="4" fill="#2a5ae0"/><circle cx="19" cy="59" r="4.5" fill="#1a6a2a"/><circle cx="32" cy="54" r="3" fill="#ff6a2a"/><circle cx="7" cy="54" r="2.5" fill="#ff9a6a"/><line x1="36" y1="55" x2="56" y2="55" stroke="#ff5a1a" stroke-width="2"/><polygon points="47,51 58,55 47,59" fill="#ff5a1a"/><text x="64" y="59" font-size="13" font-weight="bold" fill="#ff5a1a" text-anchor="middle" font-family="Liberation Sans">x</text></svg>
<div class="t" style="left:47.0px;top:497.9px;font-size:14.9px;color:#7a7a7a;">Click an object. Double-click to select an edge loop. Triple-click to select a solid.</div>
<div class="r" style="left:691px;top:448px;width:76px;height:2.4px;background:#1f3fd8;border-radius:1px;"></div>
<div class="t" style="left:714.2px;top:453.8px;font-size:11.4px;color:#5a64c4;text-shadow:0 0 2px #fff,0 0 3px #fff;">50mm</div>
<div class="r" style="left:1438px;top:448px;width:88px;height:2.4px;background:#1f3fd8;border-radius:1px;"></div>
<div class="t" style="left:1466.5px;top:453.8px;font-size:11.4px;color:#5a64c4;text-shadow:0 0 2px #fff,0 0 3px #fff;">70mm</div>
<div class="r" style="left:689px;top:743px;width:81px;height:2.4px;background:#1f3fd8;border-radius:1px;"></div>
<div class="t" style="left:714.0px;top:748.8px;font-size:11.4px;color:#5a64c4;text-shadow:0 0 2px #fff,0 0 3px #fff;">30mm</div>
<div class="r" style="left:1440px;top:743px;width:82px;height:2.4px;background:#1f3fd8;border-radius:1px;"></div>
<div class="t" style="left:1466.5px;top:748.8px;font-size:11.4px;color:#5a64c4;text-shadow:0 0 2px #fff,0 0 3px #fff;">30mm</div>
</div></body></html>
